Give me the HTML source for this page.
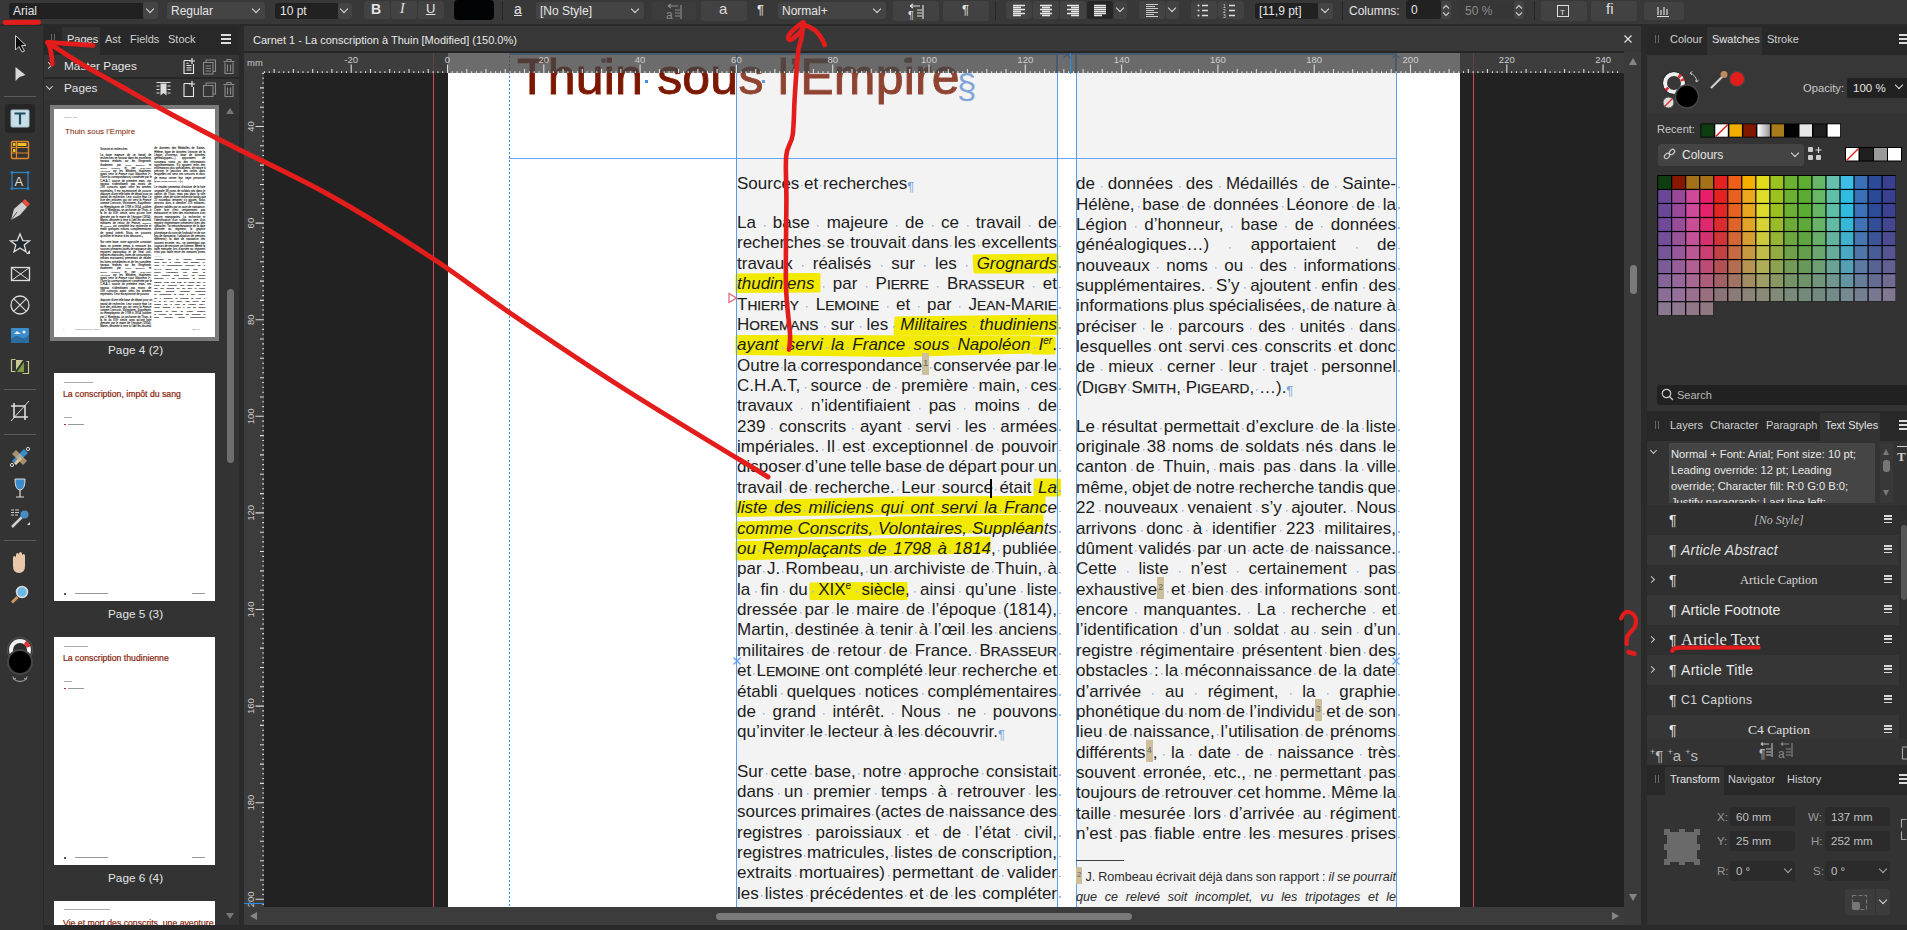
<!DOCTYPE html>
<html><head><meta charset="utf-8">
<style>
*{box-sizing:border-box;margin:0;padding:0}
html,body{width:1907px;height:930px;overflow:hidden;background:#2a2a2a;font-family:"Liberation Sans",sans-serif;color:#e6e6e6}
.a{position:absolute}
.tb{background:#383838}
.inp{background:#212121;border-radius:3px}
.dd{background:#444;border-radius:3px}
.btn{background:#424242;border-radius:3px}
.t{position:absolute;white-space:nowrap;font-size:12px;color:#e4e4e4;line-height:14px}
.chev{position:absolute;width:6px;height:6px;border-right:1.2px solid #ddd;border-bottom:1.2px solid #ddd;transform:rotate(45deg)}

.ln{position:absolute;width:320px;height:20.37px;font-size:17px;line-height:20.37px;color:#1c1c1c;white-space:nowrap;text-align:justify;text-align-last:justify}
.ln.ll{text-align:left;text-align-last:left}
.ln i{font-style:italic}
.ln s{text-decoration:none;font-size:13.7px;-webkit-text-stroke:0.25px #1c1c1c}
.ln sup{font-size:10px;line-height:0;vertical-align:6px}
.ln u{text-decoration:none;font-size:9px;color:#666;background:#cdbf9c;vertical-align:5px;line-height:0;padding:5px 1px 7px}
.pm{font-weight:normal;color:#7aa4dc;font-size:13px;vertical-align:-2px}
.hl{position:absolute;background:#f2ea00;border-radius:3px}
.fnl{position:absolute;width:320px;height:20px;font-size:12.6px;line-height:20px;color:#2a2a2a;white-space:nowrap;text-align:justify;text-align-last:justify}
.fs{text-decoration:none;font-size:8px;color:#666;background:#cdbf9c;vertical-align:4px;padding:3px 1px 5px;line-height:0}
.thumbc .ln,.thumbc .fnl{color:#000;-webkit-text-stroke:0.45px #000}
.ln .sp{background:linear-gradient(#9dbbe8,#9dbbe8) no-repeat 50% 11.5px/1.6px 1.6px}
.ln:not(.ll)::after{content:"";position:absolute;left:322px;top:12.5px;width:1.6px;height:1.6px;background:#9dbbe8}
</style></head><body>

<!-- ============ TOP TOOLBAR ============ -->
<div id="top" class="a tb" style="left:0;top:0;width:1907px;height:24px">
  <div class="a inp" style="left:9px;top:3px;width:135px;height:16px"></div>
  <div class="t" style="left:13px;top:4px;font-size:12px">Arial</div>
  <div class="a dd" style="left:143px;top:2px;width:15px;height:17px"></div>
  <div class="chev" style="left:147px;top:6px"></div>
  <div class="a dd" style="left:167px;top:2px;width:98px;height:17px"></div>
  <div class="t" style="left:171px;top:4px">Regular</div>
  <div class="chev" style="left:253px;top:6px"></div>
  <div class="a inp" style="left:275px;top:3px;width:64px;height:16px"></div>
  <div class="t" style="left:280px;top:4px">10 pt</div>
  <div class="a dd" style="left:338px;top:3px;width:14px;height:16px"></div>
  <div class="chev" style="left:341px;top:6px"></div>
  <div class="a btn" style="left:364px;top:1px;width:26px;height:18px"></div>
  <div class="t" style="left:371px;top:2px;font-weight:bold;font-size:14px">B</div>
  <div class="a btn" style="left:391px;top:1px;width:26px;height:18px"></div>
  <div class="t" style="left:400px;top:2px;font-style:italic;font-size:14px;font-family:'Liberation Serif'">I</div>
  <div class="a btn" style="left:418px;top:1px;width:26px;height:18px"></div>
  <div class="t" style="left:426px;top:2px;font-size:13px;text-decoration:underline">U</div>
  <div class="a" style="left:454px;top:0px;width:40px;height:20px;background:#020304;border-radius:4px"></div>
  <div class="a" style="left:502px;top:1px;width:1px;height:19px;background:#262626"></div>
  <div class="t" style="left:514px;top:2px;font-size:14px;text-decoration:underline">a</div>
  <div class="a dd" style="left:536px;top:2px;width:108px;height:17px"></div>
  <div class="t" style="left:540px;top:4px">[No Style]</div>
  <div class="chev" style="left:632px;top:6px"></div>
  <div class="a" style="left:652px;top:2px;width:44px;height:18px;background:#3c3c3c;border-radius:3px"></div>
  <svg class="a" style="left:665px;top:3px" width="20" height="17" viewBox="0 0 20 17"><g fill="none" stroke="#8a8a8a" stroke-width="1.2"><path d="M3 3h10M3 3l3-2M3 3l3 2M16 2v14M10 7h5M10 10h5M10 13h5"/></g><text x="1" y="16" font-size="12" fill="#8a8a8a" font-family="Liberation Sans">a</text></svg>
  <div class="a btn" style="left:701px;top:1px;width:46px;height:20px"></div>
  <div class="t" style="left:719px;top:2px;font-size:15px;color:#ddd">a</div>
  <div class="t" style="left:757px;top:3px;font-size:13px">¶</div>
  <div class="a dd" style="left:778px;top:2px;width:108px;height:17px"></div>
  <div class="t" style="left:782px;top:4px">Normal+</div>
  <div class="chev" style="left:874px;top:6px"></div>
  <div class="a btn" style="left:893px;top:1px;width:46px;height:20px"></div>
  <svg class="a" style="left:907px;top:3px" width="20" height="17" viewBox="0 0 20 17"><g fill="none" stroke="#ddd" stroke-width="1.2"><path d="M3 3h10M3 3l3-2M3 3l3 2M16 2v14M10 7h5M10 10h5M10 13h5"/></g><text x="1" y="16" font-size="11" fill="#ddd" font-family="Liberation Sans">¶</text></svg>
  <div class="a btn" style="left:943px;top:1px;width:46px;height:20px"></div>
  <div class="t" style="left:962px;top:3px;font-size:13px">¶</div>
  <div class="a" style="left:995px;top:1px;width:1px;height:19px;background:#262626"></div>
  <!-- align buttons -->
  <div class="a btn" style="left:1006px;top:1px;width:26px;height:18px"></div>
  <div class="a btn" style="left:1033px;top:1px;width:26px;height:18px"></div>
  <div class="a btn" style="left:1060px;top:1px;width:26px;height:18px"></div>
  <div class="a" style="left:1087px;top:1px;width:26px;height:18px;background:#262626;border-radius:3px"></div>
  <div class="a btn" style="left:1114px;top:1px;width:13px;height:18px"></div>
  <div class="chev" style="left:1117px;top:5px"></div>
  <svg class="a" style="left:1006px;top:1px" width="108" height="18"><g stroke="#e8e8e8" stroke-width="1.3">
    <path d="M7 4.5h12M7 6.5h8M7 8.5h12M7 10.5h8M7 12.5h12M7 14.5h8"/>
    <path d="M34 4.5h12M36 6.5h8M34 8.5h12M36 10.5h8M34 12.5h12M36 14.5h8"/>
    <path d="M61 4.5h12M65 6.5h8M61 8.5h12M65 10.5h8M61 12.5h12M65 14.5h8"/>
    <path d="M88 4.5h12M88 6.5h12M88 8.5h12M88 10.5h12M88 12.5h12M88 14.5h8"/>
  </g></svg>
  <div class="a btn" style="left:1139px;top:1px;width:26px;height:18px"></div>
  <div class="a btn" style="left:1166px;top:1px;width:13px;height:18px"></div>
  <div class="chev" style="left:1169px;top:5px"></div>
  <svg class="a" style="left:1139px;top:1px" width="26" height="18"><g stroke="#ccc" stroke-width="1.2"><path d="M7 3.5h12M7 5.5h9M7 7.5h12M7 9.5h8M7 11.5h12M7 13.5h8M7 15.5h12"/></g></svg>
  <div class="a btn" style="left:1191px;top:1px;width:26px;height:18px"></div>
  <div class="a btn" style="left:1218px;top:1px;width:26px;height:18px"></div>
  <svg class="a" style="left:1191px;top:1px" width="54" height="18"><g stroke="#ddd" stroke-width="1.3"><path d="M11 4.5h6M11 9.5h6M11 14.5h6M38 4.5h6M38 9.5h6M38 14.5h6"/></g><g fill="#ddd"><circle cx="7.5" cy="4.5" r="1"/><circle cx="7.5" cy="9.5" r="1"/><circle cx="7.5" cy="14.5" r="1"/></g><text x="32" y="7" font-size="5" fill="#ddd">1</text><text x="32" y="12" font-size="5" fill="#ddd">2</text><text x="32" y="17" font-size="5" fill="#ddd">3</text></svg>
  <div class="a inp" style="left:1255px;top:3px;width:64px;height:16px"></div>
  <div class="t" style="left:1259px;top:4px">[11,9 pt]</div>
  <div class="a dd" style="left:1318px;top:3px;width:15px;height:16px"></div>
  <div class="chev" style="left:1322px;top:6px"></div>
  <div class="a" style="left:1342px;top:1px;width:1px;height:19px;background:#262626"></div>
  <div class="t" style="left:1349px;top:4px">Columns:</div>
  <div class="a inp" style="left:1406px;top:0px;width:35px;height:19px"></div>
  <div class="t" style="left:1411px;top:3px">0</div>
  <div class="a dd" style="left:1441px;top:1px;width:10px;height:18px"></div><svg class="a" style="left:1441px;top:3px" width="10" height="15"><path d="M2 5.5L5 2.5L8 5.5M2 9.5L5 12.5L8 9.5" stroke="#ccc" stroke-width="1.1" fill="none"/></svg>
  <div class="a" style="left:1459px;top:1px;width:55px;height:18px;background:#363636;border-radius:3px"></div>
  <div class="t" style="left:1465px;top:4px;color:#8c8c8c">50 %</div>
  <div class="a dd" style="left:1514px;top:1px;width:10px;height:18px"></div><svg class="a" style="left:1514px;top:3px" width="10" height="15"><path d="M2 5.5L5 2.5L8 5.5M2 9.5L5 12.5L8 9.5" stroke="#ccc" stroke-width="1.1" fill="none"/></svg>
  <div class="a" style="left:1534px;top:1px;width:1px;height:19px;background:#262626"></div>
  <div class="a btn" style="left:1541px;top:1px;width:46px;height:20px"></div>
  <div class="a" style="left:1557px;top:5px;width:12px;height:12px;border:1.3px solid #ddd"></div>
  <div class="t" style="left:1560px;top:6px;font-size:8px">T</div>
  <div class="a btn" style="left:1591px;top:1px;width:46px;height:20px"></div>
  <div class="t" style="left:1606px;top:2px;font-size:15px;color:#ddd">fi</div>
  <div class="a btn" style="left:1644px;top:2px;width:40px;height:18px"></div>
  <svg class="a" style="left:1656px;top:4px" width="14" height="14"><g stroke="#ddd" stroke-width="1.2"><path d="M2 3v8M5 6v5M8 3v8M11 5v6M1 12.5h12"/></g></svg>
</div>
<!-- separator line under toolbar -->
<div class="a" style="left:0;top:24px;width:1907px;height:2px;background:#2a2a2a"></div>

<!-- ============ LEFT TOOLS ============ -->
<div id="tools" class="a" style="left:0;top:26px;width:43px;height:904px;background:#333">
</div>
<svg class="a" style="left:0;top:0" width="43" height="930">
  <!-- select arrow -->
  <path d="M15.5 35.5 L15.5 50 L19 46.5 L22 52 L24.5 51 L21.5 45.5 L26 45.5 Z" fill="#0a0a0a" stroke="#ddd" stroke-width="0.9"/>
  <!-- node tool -->
  <path d="M15.5 67 L15.5 81 L19.5 77 L25.5 75 Z" fill="#d8d8d8"/>
  <path d="M4 96.5h32" stroke="#5a5a5a" stroke-width="1"/>
  <!-- text tool selected -->
  <rect x="5" y="104" width="30" height="29" rx="3" fill="#262626"/>
  <rect x="11" y="110" width="18" height="17" rx="1" fill="#c9dfe8" stroke="#a8c4d0" stroke-width="1"/>
  <path d="M14.5 113.5h11M20 113.5v11" stroke="#1d4d63" stroke-width="2.2"/>
  <!-- table -->
  <rect x="11.5" y="141.5" width="17" height="17" rx="1" fill="none" stroke="#e08a2a" stroke-width="1.4"/>
  <path d="M11.5 147.5h17M11.5 153h17M16.5 141.5v17" stroke="#e08a2a" stroke-width="1.2"/>
  <rect x="13" y="143" width="2.5" height="3" fill="#f0c020"/><rect x="13" y="149" width="2.5" height="3" fill="#f0c020"/><rect x="17.5" y="143" width="9" height="3" fill="#f0c020"/>
  <!-- artistic text -->
  <rect x="12" y="172.5" width="16" height="16" fill="none" stroke="#2a80c0" stroke-width="1.3"/>
  <circle cx="12" cy="172.5" r="1.5" fill="#2a80c0"/><circle cx="28" cy="172.5" r="1.5" fill="#2a80c0"/><circle cx="12" cy="188.5" r="1.5" fill="#2a80c0"/><circle cx="28" cy="188.5" r="1.5" fill="#2a80c0"/>
  <text x="14.5" y="186" font-size="13" fill="#ddd" font-family="Liberation Sans">A</text>
  <!-- pen -->
  <path d="M11 220 L14 209 L22 202 L27 207 L20 215 Z" fill="#cfcfcf"/>
  <path d="M22 202 L25 199 L30 204 L27 207 Z" fill="#e8503a"/>
  <path d="M11 220 L17 212" stroke="#555" stroke-width="1"/>
  <!-- star -->
  <path d="M20 234 L22.8 240.6 L29.5 240.8 L24.2 245 L26 251.8 L20 248 L14 251.8 L15.8 245 L10.5 240.8 L17.2 240.6 Z" fill="#1e2a30" stroke="#ddd" stroke-width="1.3"/>
  <path d="M30 250 L30 254 L26 254 Z" fill="#ddd"/>
  <!-- frame rect -->
  <rect x="11.5" y="267.5" width="18" height="13" fill="none" stroke="#ddd" stroke-width="1.3"/>
  <path d="M11.5 267.5 L29.5 280.5 M29.5 267.5 L11.5 280.5" stroke="#ddd" stroke-width="1"/>
  <!-- ellipse frame -->
  <circle cx="20" cy="305" r="9" fill="none" stroke="#ddd" stroke-width="1.3"/>
  <path d="M13.6 298.6 L26.4 311.4 M26.4 298.6 L13.6 311.4" stroke="#ddd" stroke-width="1.1"/>
  <!-- picture -->
  <rect x="11" y="328" width="18" height="15" rx="1" fill="#3a8ccc"/>
  <path d="M11 339 Q16 334 20 337 T29 335 V343 H11 Z" fill="#2a6ca0"/>
  <path d="M14 334 L17 331 L21 334 Z" fill="#e8f0f4"/>
  <circle cx="24" cy="332" r="1.6" fill="#e8f0f4"/>
  <!-- linked -->
  <path d="M11.5 359.5 h4 M11.5 359.5 v12 h4" stroke="#c8c890" stroke-width="1.2" fill="none"/>
  <path d="M16 360 h7 l-7 10 Z" fill="#c8c890"/><path d="M24 362 v10 h-7 Z" fill="#78a040"/>
  <path d="M22.5 373.5 h6 v-12 h-2" stroke="#c8c890" stroke-width="1.2" fill="none"/>
  <path d="M4 389.5h32" stroke="#5a5a5a" stroke-width="1"/>
  <!-- crop -->
  <path d="M14 403 V417 H28 M11 406 H25 V420" stroke="#ddd" stroke-width="1.6" fill="none"/>
  <path d="M11 421 L29 401" stroke="#ddd" stroke-width="1"/>
  <path d="M4 434.5h32" stroke="#5a5a5a" stroke-width="1"/>
  <!-- fill tool (pencils) -->
  <path d="M12 461 L24 449 L28 453 L16 465 Z" fill="#3a8ccc"/>
  <path d="M14 463 L20 457 L22 459 L16 465 Z" fill="#e8c898"/>
  <path d="M12 454 L16 450 L27 461 L23 465 Z" fill="#d8b888" opacity="0.7"/>
  <circle cx="12" cy="465" r="1.6" fill="none" stroke="#ddd" stroke-width="1"/><circle cx="28" cy="449" r="1.6" fill="none" stroke="#ddd" stroke-width="1"/>
  <!-- transparency (glass) -->
  <path d="M15 479 Q15 490 20 490 Q25 490 25 479 Z" fill="#3a8ccc" stroke="#ddd" stroke-width="1"/>
  <path d="M20 490 V497 M16 497 H24" stroke="#ddd" stroke-width="1.2"/>
  <!-- dropper w/ list -->
  <path d="M11 510h3M11 512.5h3M11 515h3M15 510h4M15 512.5h4M15 515h3" stroke="#ddd" stroke-width="0.9"/>
  <path d="M12 527 L22 517" stroke="#cfcfcf" stroke-width="2.5"/>
  <circle cx="24.5" cy="514.5" r="4" fill="#4a8cc0"/>
  <path d="M30 522 L30 525 L27 525 Z" fill="#ddd"/>
  <path d="M4 540.5h32" stroke="#5a5a5a" stroke-width="1"/>
  <!-- hand -->
  <path d="M13 566 V558 Q13 556 14.5 556 Q16 556 16 558 V562 V555 Q16 553 17.5 553 Q19 553 19 555 V561 V554 Q19 552 20.5 552 Q22 552 22 554 V561 V556 Q22 554 23.5 554 Q25 554 25 556 V566 Q25 573 19 573 Q13 573 13 566 Z" fill="#e8c8a8"/>
  <!-- zoom -->
  <circle cx="22" cy="592" r="5.5" fill="#6ab8e8" stroke="#ddd" stroke-width="1.5"/>
  <path d="M17.5 597 L12 602.5" stroke="#c89860" stroke-width="3"/>
  <!-- colour wells -->
  <circle cx="20" cy="650" r="12.5" fill="#2c2c2c" stroke="#4a4a4a" stroke-width="1.5"/>
  <circle cx="20" cy="650" r="9" fill="none" stroke="#f0f0f0" stroke-width="4"/>
  <path d="M25 642.5 A9 9 0 0 1 28.6 647" stroke="#e23030" stroke-width="4" fill="none"/>
  <circle cx="20" cy="662" r="12" fill="#000" stroke="#464646" stroke-width="2"/>
  <path d="M13.5 679 Q20 684 26.5 679" stroke="#aaa" stroke-width="1" fill="none"/>
  <path d="M13.5 679 l-0.5 -2.5 M13.5 679 l2.5 -0.5 M26.5 679 l-2.5 -0.5 M26.5 679 l0.5 -2.5" stroke="#aaa" stroke-width="1"/>
</svg>

<!-- ============ PAGES PANEL ============ -->
<div id="pages" class="a" style="left:44px;top:26px;width:195px;height:899px;background:#333"></div>
<div class="a" style="left:44px;top:26px;width:195px;height:29px;background:#282828"></div>
<div class="a" style="left:62px;top:27px;width:38px;height:28px;background:#333"></div>
<div class="a" style="left:51px;top:34px;width:1px;height:8px;background:#666"></div>
<div class="a" style="left:54px;top:34px;width:1px;height:8px;background:#666"></div>
<div class="t" style="left:67px;top:32px;font-size:11px">Pages</div>
<div class="t" style="left:105px;top:32px;font-size:11px;color:#d0d0d0">Ast</div>
<div class="t" style="left:130px;top:32px;font-size:11px;color:#d0d0d0">Fields</div>
<div class="t" style="left:168px;top:32px;font-size:11px;color:#d0d0d0">Stock</div>
<div class="a" style="left:221px;top:34px;width:10px;height:10px;background:repeating-linear-gradient(to bottom,#ddd 0 1.6px,transparent 1.6px 4px)"></div>
<div class="a" style="left:44px;top:55px;width:195px;height:22px;background:#353535"></div>
<div class="a" style="left:44px;top:77px;width:195px;height:2px;background:#272727"></div>
<div class="a" style="left:44px;top:79px;width:195px;height:21px;background:#353535"></div>
<div class="a" style="left:46px;top:63px;width:5px;height:5px;border-right:1.2px solid #ccc;border-top:1.2px solid #ccc;transform:rotate(45deg)"></div>
<div class="t" style="left:64px;top:59px;font-size:11.8px">Master Pages</div>
<div class="a" style="left:47px;top:84px;width:5px;height:5px;border-right:1.2px solid #ccc;border-bottom:1.2px solid #ccc;transform:rotate(45deg)"></div>
<div class="t" style="left:64px;top:81px;font-size:11.8px">Pages</div>
<svg class="a" style="left:150px;top:55px" width="89" height="45">
 <g fill="none" stroke-width="1.1">
  <path d="M34 5.5h6.5M43.5 9v9.5h-9.5v-13" stroke="#e8e8e8"/><path d="M36.5 10.5h5M36.5 12.8h5M36.5 15h5M36.5 8.3h2" stroke="#e8e8e8"/><path d="M42 3v6M39 6h6" stroke="#e8e8e8" stroke-width="1.2"/>
  <path d="M53.5 7.5h9.5v11.5h-9.5z M56 7.5v-2.5h9.5v11.5h-2.5" stroke="#8a8a8a"/><path d="M55.5 11h5.5M55.5 13.5h5.5M55.5 16h5.5" stroke="#8a8a8a"/>
  <path d="M73.5 6.5h11M77 6.5v-2h4v2M75 7.5v11h8v-11M77.5 9.5v7M80.5 9.5v7" stroke="#8a8a8a"/>
  <path d="M6.5 27.5h14M6.5 31h3M17.5 31h3M6.5 34.5h3M17.5 34.5h3M6.5 38h3M17.5 38h3" stroke="#ddd"/><path d="M10.5 28.5h6v12l-3-2.5-3 2.5z" fill="#ddd" stroke="none"/>
  <path d="M34 28.5h6.5M43.5 32v9.5h-9.5v-13" stroke="#e8e8e8"/><path d="M42 26v6M39 29h6" stroke="#e8e8e8" stroke-width="1.2"/>
  <path d="M53.5 30.5h9.5v11h-9.5z M56 30.5v-2.5h9.5v11h-2.5" stroke="#8a8a8a"/>
  <path d="M73.5 29.5h11M77 29.5v-2h4v2M75 30.5v11h8v-11M77.5 32.5v7M80.5 32.5v7" stroke="#8a8a8a"/>
 </g>
</svg>
<!-- scrollbar -->
<div class="a" style="left:227px;top:289px;width:7px;height:174px;background:#6e6e6e;border-radius:4px"></div>
<div class="a" style="left:226px;top:108px;width:0;height:0;border-left:4px solid transparent;border-right:4px solid transparent;border-bottom:6px solid #777"></div>
<div class="a" style="left:226px;top:913px;width:0;height:0;border-left:4px solid transparent;border-right:4px solid transparent;border-top:6px solid #777"></div>
<!-- page 4 thumb -->
<div class="a" style="left:50px;top:105px;width:169px;height:236px;background:#7b7b7b"></div>
<div class="a" style="left:54px;top:109px;width:161px;height:228px;background:#fff;overflow:hidden"><div class="a thumbc" style="left:0;top:0;width:1012.5px;height:1431px;transform-origin:0 0;transform:scale(0.1594)"><div class="t" style="left:62.5px;top:46.7px;font-size:11px;line-height:14px;color:#666">Conscrits · Thuin</div><div class="t" style="left:69.5px;top:110.7px;font-size:50px;line-height:60px;color:#7c1800">Thuin sous l’Empire</div><div class="a" style="left:628.5px;top:926.2px;width:48px;height:1px;background:#444"></div><div class="ln ll" style="left:289.5px;top:239.5px">Sources et recherches</div><div class="ln" style="left:289.5px;top:278.7px">La base majeure de ce travail de</div><div class="ln" style="left:289.5px;top:299.1px">recherches se trouvait dans les excellents</div><div class="ln" style="left:289.5px;top:319.5px">travaux réalisés sur les <i>Grognards</i></div><div class="ln" style="left:289.5px;top:339.8px"><i>thudiniens</i> par <s>Pierre Brasseur</s> et</div><div class="ln" style="left:289.5px;top:360.2px"><s>Thierry Lemoine</s> et par <s>Jean-Marie</s></div><div class="ln" style="left:289.5px;top:380.6px"><s>Horemans</s> sur les <i>Militaires thudiniens</i></div><div class="ln" style="left:289.5px;top:400.9px"><i>ayant servi la France sous Napoléon I<sup>er</sup></i>.</div><div class="ln" style="left:289.5px;top:421.3px">Outre la correspondance<u>1</u> conservée par le</div><div class="ln" style="left:289.5px;top:441.7px">C.H.A.T, source de première main, ces</div><div class="ln" style="left:289.5px;top:462.1px">travaux n’identifiaient pas moins de</div><div class="ln" style="left:289.5px;top:482.4px">239 conscrits ayant servi les armées</div><div class="ln" style="left:289.5px;top:502.8px">impériales. Il est exceptionnel de pouvoir</div><div class="ln" style="left:289.5px;top:523.2px">disposer d’une telle base de départ pour un</div><div class="ln" style="left:289.5px;top:543.5px">travail de recherche. Leur source était <i>La</i></div><div class="ln" style="left:289.5px;top:563.9px"><i>liste des miliciens qui ont servi la France</i></div><div class="ln" style="left:289.5px;top:584.3px"><i>comme Conscrits, Volontaires, Suppléants</i></div><div class="ln" style="left:289.5px;top:604.6px"><i>ou Remplaçants de 1798 à 1814</i>, publiée</div><div class="ln" style="left:289.5px;top:625.0px">par J. Rombeau, un archiviste de Thuin, à</div><div class="ln" style="left:289.5px;top:645.4px">la fin du XIX<sup>e</sup> siècle, ainsi qu’une liste</div><div class="ln" style="left:289.5px;top:665.8px">dressée par le maire de l’époque (1814),</div><div class="ln" style="left:289.5px;top:686.1px">Martin, destinée à tenir à l’œil les anciens</div><div class="ln" style="left:289.5px;top:706.5px">militaires de retour de France. <s>Brasseur</s></div><div class="ln" style="left:289.5px;top:726.9px">et <s>Lemoine</s> ont complété leur recherche et</div><div class="ln" style="left:289.5px;top:747.2px">établi quelques notices complémentaires</div><div class="ln" style="left:289.5px;top:767.6px">de grand intérêt. Nous ne pouvons</div><div class="ln ll" style="left:289.5px;top:788.0px">qu’inviter le lecteur à les découvrir.<b class="pm">¶</b></div><div class="ln" style="left:289.5px;top:827.2px">Sur cette base, notre approche consistait</div><div class="ln" style="left:289.5px;top:847.6px">dans un premier temps à retrouver les</div><div class="ln" style="left:289.5px;top:868.0px">sources primaires (actes de naissance des</div><div class="ln" style="left:289.5px;top:888.3px">registres paroissiaux et de l’état civil,</div><div class="ln" style="left:289.5px;top:908.7px">registres matricules, listes de conscription,</div><div class="ln" style="left:289.5px;top:929.1px">extraits mortuaires) permettant de valider</div><div class="ln" style="left:289.5px;top:949.5px">les listes précédentes et de les compléter</div><div class="ln" style="left:289.5px;top:969.8px">travaux réalisés sur les <i>Grognards</i></div><div class="ln" style="left:289.5px;top:990.2px"><i>thudiniens</i> par <s>Pierre Brasseur</s> et</div><div class="ln" style="left:289.5px;top:1010.6px"><s>Thierry Lemoine</s> et par <s>Jean-Marie</s></div><div class="ln" style="left:289.5px;top:1030.9px"><s>Horemans</s> sur les <i>Militaires thudiniens</i></div><div class="ln" style="left:289.5px;top:1051.3px"><i>ayant servi la France sous Napoléon I<sup>er</sup></i>.</div><div class="ln" style="left:289.5px;top:1071.7px">Outre la correspondance<u>1</u> conservée par le</div><div class="ln" style="left:289.5px;top:1092.0px">C.H.A.T, source de première main, ces</div><div class="ln" style="left:289.5px;top:1112.4px">travaux n’identifiaient pas moins de</div><div class="ln" style="left:289.5px;top:1132.8px">239 conscrits ayant servi les armées</div><div class="ln ll" style="left:289.5px;top:1153.2px">impériales. Il est exceptionnel de pouvoir</div><div class="ln" style="left:289.5px;top:1192.3px">disposer d’une telle base de départ pour un</div><div class="ln" style="left:289.5px;top:1212.7px">travail de recherche. Leur source était <i>La</i></div><div class="ln" style="left:289.5px;top:1233.1px"><i>liste des miliciens qui ont servi la France</i></div><div class="ln" style="left:289.5px;top:1253.4px"><i>comme Conscrits, Volontaires, Suppléants</i></div><div class="ln" style="left:289.5px;top:1273.8px"><i>ou Remplaçants de 1798 à 1814</i>, publiée</div><div class="ln" style="left:289.5px;top:1294.2px">par J. Rombeau, un archiviste de Thuin, à</div><div class="ln" style="left:289.5px;top:1314.5px">la fin du XIX<sup>e</sup> siècle, ainsi qu’une liste</div><div class="ln" style="left:289.5px;top:1334.9px">dressée par le maire de l’époque (1814),</div><div class="ln" style="left:289.5px;top:1355.3px">Martin, destinée à tenir à l’œil les anciens</div><div class="ln" style="left:628.5px;top:239.1px">de données des Médaillés de Sainte-</div><div class="ln" style="left:628.5px;top:259.5px">Hélène, base de données Léonore de la</div><div class="ln" style="left:628.5px;top:279.9px">Légion d’honneur, base de données</div><div class="ln" style="left:628.5px;top:300.2px">généalogiques…) apportaient de</div><div class="ln" style="left:628.5px;top:320.6px">nouveaux noms ou des informations</div><div class="ln" style="left:628.5px;top:341.0px">supplémentaires. S’y ajoutent enfin des</div><div class="ln" style="left:628.5px;top:361.4px">informations plus spécialisées, de nature à</div><div class="ln" style="left:628.5px;top:381.7px">préciser le parcours des unités dans</div><div class="ln" style="left:628.5px;top:402.1px">lesquelles ont servi ces conscrits et donc</div><div class="ln" style="left:628.5px;top:422.5px">de mieux cerner leur trajet personnel</div><div class="ln ll" style="left:628.5px;top:442.8px">(<s>Digby Smith</s>, <s>Pigeard</s>, …).<b class="pm">¶</b></div><div class="ln" style="left:628.5px;top:482.4px">Le résultat permettait d’exclure de la liste</div><div class="ln" style="left:628.5px;top:502.8px">originale 38 noms de soldats nés dans le</div><div class="ln" style="left:628.5px;top:523.2px">canton de Thuin, mais pas dans la ville</div><div class="ln" style="left:628.5px;top:543.5px">même, objet de notre recherche tandis que</div><div class="ln" style="left:628.5px;top:563.9px">22 nouveaux venaient s’y ajouter. Nous</div><div class="ln" style="left:628.5px;top:584.3px">arrivons donc à identifier 223 militaires,</div><div class="ln" style="left:628.5px;top:604.6px">dûment validés par un acte de naissance.</div><div class="ln" style="left:628.5px;top:625.0px">Cette liste n’est certainement pas</div><div class="ln" style="left:628.5px;top:645.4px">exhaustive<u>2</u> et bien des informations sont</div><div class="ln" style="left:628.5px;top:665.8px">encore manquantes. La recherche et</div><div class="ln" style="left:628.5px;top:686.1px">l’identification d’un soldat au sein d’un</div><div class="ln" style="left:628.5px;top:706.5px">registre régimentaire présentent bien des</div><div class="ln" style="left:628.5px;top:726.9px">obstacles : la méconnaissance de la date</div><div class="ln" style="left:628.5px;top:747.2px">d’arrivée au régiment, la graphie</div><div class="ln" style="left:628.5px;top:767.6px">phonétique du nom de l’individu<u>3</u> et de son</div><div class="ln" style="left:628.5px;top:788.0px">lieu de naissance, l’utilisation de prénoms</div><div class="ln" style="left:628.5px;top:808.4px">différents<u>4</u>, la date de naissance très</div><div class="ln" style="left:628.5px;top:828.7px">souvent erronée, etc., ne permettant pas</div><div class="ln" style="left:628.5px;top:849.1px">toujours de retrouver cet homme. Même la</div><div class="ln" style="left:628.5px;top:869.5px">taille mesurée lors d’arrivée au régiment</div><div class="ln" style="left:628.5px;top:889.8px">n’est pas fiable entre les mesures prises</div><div class="fnl" style="left:628.5px;top:933.7px;font-size:12.4px">Horemans sur les Militaires thudiniens</div><div class="fnl" style="left:628.5px;top:953.9px;font-size:12.4px">ayant servi la France sous Napoléon Ier.</div><div class="fnl" style="left:628.5px;top:974.1px;font-size:12.4px">Outre la correspondance1 conservée par le</div><div class="fnl" style="left:628.5px;top:994.3px;font-size:12.4px">C.H.A.T, source de première main, ces</div><div class="fnl" style="left:628.5px;top:1014.5px;font-size:12.4px">travaux n’identifiaient pas moins de</div><div class="fnl" style="left:628.5px;top:1034.7px;font-size:12.4px">239 conscrits ayant servi les armées</div><div class="fnl" style="left:628.5px;top:1054.9px;font-size:12.4px">impériales. Il est exceptionnel de pouvoir</div><div class="fnl" style="left:628.5px;top:1075.1px;font-size:12.4px">disposer d’une telle base de départ pour un</div><div class="fnl" style="left:628.5px;top:1095.3px;font-size:12.4px">travail de recherche. Leur source était La</div><div class="fnl" style="left:628.5px;top:1115.5px;font-size:12.4px">liste des miliciens qui ont servi la France</div><div class="fnl" style="left:628.5px;top:1135.7px;font-size:12.4px">comme Conscrits, Volontaires, Suppléants</div><div class="fnl" style="left:628.5px;top:1155.9px;font-size:12.4px">ou Remplaçants de 1798 à 1814, publiée</div><div class="fnl" style="left:628.5px;top:1176.1px;font-size:12.4px">par J. Rombeau, un archiviste de Thuin, à</div><div class="fnl" style="left:628.5px;top:1196.3px;font-size:12.4px">la fin du XIXe siècle, ainsi qu’une liste</div><div class="fnl" style="left:628.5px;top:1216.5px;font-size:12.4px">dressée par le maire de l’époque (1814),</div><div class="fnl" style="left:628.5px;top:1236.7px;font-size:12.4px">Martin, destinée à tenir à l’œil les anciens</div><div class="fnl" style="left:628.5px;top:1256.9px;font-size:12.4px">militaires de retour de France. Brasseur</div><div class="fnl" style="left:628.5px;top:1277.1px;font-size:12.4px">et Lemoine ont complété leur recherche et</div><div class="fnl" style="left:628.5px;top:1297.3px;font-size:12.4px">établi quelques notices complémentaires</div><div class="t" style="left:58.5px;top:1373.7px;font-size:11px;color:#333">1</div><div class="t" style="left:131.5px;top:1373.7px;font-size:11px;color:#555">Conscrits thudiniens de l’Empire</div><div class="t" style="left:865.5px;top:1373.7px;font-size:11px;color:#555">Page 4/48</div></div></div>
<div class="t" style="left:108px;top:343px;font-size:11.8px">Page 4 (2)</div>
<!-- page 5 -->
<div class="a" style="left:54px;top:373px;width:161px;height:228px;background:#fff;overflow:hidden">
  <div class="a" style="left:10px;top:9px;width:29px;height:1px;background:#aaa"></div>
  <div class="t" style="left:9px;top:16px;font-size:8.7px;-webkit-text-stroke:0.2px #8a1e10;line-height:10px;color:#861a08">La conscription, impôt du sang</div>
  <div class="a" style="left:10px;top:44px;width:8px;height:1px;background:#aaa"></div>
  <div class="a" style="left:10px;top:51px;width:2px;height:1px;background:#b03020"></div><div class="a" style="left:14px;top:51px;width:16px;height:1px;background:#999"></div>
  <div class="a" style="left:10px;top:220px;width:2px;height:2px;background:#555"></div>
  <div class="a" style="left:21px;top:220px;width:33px;height:1px;background:#999"></div>
  <div class="a" style="left:138px;top:220px;width:13px;height:1px;background:#999"></div>
</div>
<div class="t" style="left:108px;top:607px;font-size:11.8px">Page 5 (3)</div>
<!-- page 6 -->
<div class="a" style="left:54px;top:637px;width:161px;height:228px;background:#fff;overflow:hidden">
  <div class="a" style="left:10px;top:9px;width:24px;height:1px;background:#aaa"></div>
  <div class="t" style="left:9px;top:16px;font-size:8.7px;-webkit-text-stroke:0.2px #8a1e10;line-height:10px;color:#861a08">La conscription thudinienne</div>
  <div class="a" style="left:10px;top:44px;width:8px;height:1px;background:#aaa"></div>
  <div class="a" style="left:10px;top:51px;width:2px;height:1px;background:#b03020"></div><div class="a" style="left:14px;top:51px;width:16px;height:1px;background:#999"></div>
  <div class="a" style="left:10px;top:220px;width:2px;height:2px;background:#555"></div>
  <div class="a" style="left:21px;top:220px;width:33px;height:1px;background:#999"></div>
  <div class="a" style="left:138px;top:220px;width:13px;height:1px;background:#999"></div>
</div>
<div class="t" style="left:108px;top:871px;font-size:11.8px">Page 6 (4)</div>
<!-- page 7 -->
<div class="a" style="left:54px;top:901px;width:161px;height:24px;background:#fff;overflow:hidden">
  <div class="a" style="left:10px;top:8px;width:46px;height:1px;background:#aaa"></div>
  <div class="t" style="left:9px;top:17px;font-size:8.7px;-webkit-text-stroke:0.2px #8a1e10;line-height:10px;color:#861a08">Vie et mort des conscrits, une aventure</div>
</div>


<!-- ============ DOCUMENT ============ -->
<div id="doc" class="a" style="left:244px;top:26px;width:1397px;height:899px;background:#383838"></div>
<div class="t" style="left:253px;top:33px;font-size:11px;color:#e8e8e8">Carnet 1 - La conscription à Thuin [Modified] (150.0%)</div>
<svg class="a" style="left:1623px;top:34px" width="10" height="10"><path d="M1.5 1.5L8.5 8.5M8.5 1.5L1.5 8.5" stroke="#ddd" stroke-width="1.3"/></svg>
<div id="canvas" class="a" style="left:244px;top:52px;width:1380px;height:855px;background:#222;overflow:hidden">
  <div class="a" style="left:203.5px;top:0;width:1012.5px;height:855px;background:#fff"></div>
  <div class="a" style="left:189px;top:0;width:1px;height:855px;background:#d2485a"></div>
  <div class="a" style="left:1229px;top:0;width:1px;height:855px;background:#d2485a"></div>
</div>
<!-- title -->
<div class="t" style="left:517px;top:47px;font-size:50px;line-height:60px;letter-spacing:0.2px;color:#7c1800;-webkit-text-stroke:0.9px #7c1800">Thuin sous l’Empire</div>
<div class="t" style="left:957px;top:67px;font-size:35px;line-height:40px;color:#6a9ad8">§</div>
<div class="a" style="left:645px;top:80px;width:3px;height:3px;background:#4a8ae0"></div>
<div class="a" style="left:762px;top:80px;width:3px;height:3px;background:#4a8ae0"></div>
<!-- text frame overlay -->
<div class="a" style="left:737px;top:52px;width:320px;height:855px;background:rgba(205,205,205,0.24)"></div>
<div class="a" style="left:1076px;top:52px;width:320px;height:855px;background:rgba(205,205,205,0.24)"></div>
<!-- highlights -->
<svg class="a" style="left:0;top:0" width="1907" height="930"><g fill="#f2ea00" stroke="#f2ea00" stroke-width="3" stroke-linejoin="round"><polygon points="974,256 1057,255 1057,272 975,272"/><polygon points="737,275 819,274.5 819,291 737,291.5"/><polygon points="896,318 1057,316 1057,333.5 895,334"/><polygon points="737,336.5 1030,337 1031,352 900,355.5 737,353.5"/><polygon points="1033,338 1054,338 1054,353 1033,353"/><polygon points="1035,480 1059.5,480 1059.5,495 1035,495"/><polygon points="737,502 900,498 1044,497.5 1044,512 900,513 737,515.5"/><polygon points="737,523 900,518 1042,516 1042,530.5 900,533 737,538"/><polygon points="737,542.5 989,538 989,551.5 737,559"/><polygon points="811,584 906,583.5 906,598.5 811,598.5"/></g></svg>
<!-- guides -->
<div class="a" style="left:508.5px;top:52px;width:1.5px;height:855px;background:repeating-linear-gradient(to bottom,#2e8ae8 0 2px,transparent 2px 4px)"></div>
<div class="a" style="left:509px;top:157.5px;width:887px;height:1.5px;background:#6aa6f2"></div>
<div class="a" style="left:736px;top:52px;width:1.2px;height:855px;background:#5a9cf0"></div>
<div class="a" style="left:1056.5px;top:52px;width:1.2px;height:855px;background:#5a9cf0"></div>
<div class="a" style="left:1075.5px;top:52px;width:1.2px;height:855px;background:#5a9cf0"></div>
<div class="a" style="left:1395.5px;top:52px;width:1.2px;height:855px;background:#5a9cf0"></div>
<svg class="a" style="left:732px;top:656px" width="10" height="10"><path d="M1.5 1.5L8.5 8.5M8.5 1.5L1.5 8.5" stroke="#5a9cf0" stroke-width="1.1"/></svg>
<svg class="a" style="left:1391px;top:656px" width="10" height="10"><path d="M1.5 1.5L8.5 8.5M8.5 1.5L1.5 8.5" stroke="#5a9cf0" stroke-width="1.1"/></svg>
<!-- overflow triangle -->
<svg class="a" style="left:728px;top:292px" width="10" height="12"><path d="M1 1.5 L8.5 6 L1 10.5 Z" fill="#fff" stroke="#e06070" stroke-width="1.2"/></svg>
<!-- text -->
<div id="body">
<div class="ln ll" style="left:737px;top:173.83px">Sources<span class="sp"> </span>et<span class="sp"> </span>recherches<b class="pm">¶</b></div>
<div class="ln" style="left:737px;top:213.03px">La<span class="sp"> </span>base<span class="sp"> </span>majeure<span class="sp"> </span>de<span class="sp"> </span>ce<span class="sp"> </span>travail<span class="sp"> </span>de</div>
<div class="ln" style="left:737px;top:233.40px">recherches<span class="sp"> </span>se<span class="sp"> </span>trouvait<span class="sp"> </span>dans<span class="sp"> </span>les<span class="sp"> </span>excellents</div>
<div class="ln" style="left:737px;top:253.77px">travaux<span class="sp"> </span>réalisés<span class="sp"> </span>sur<span class="sp"> </span>les<span class="sp"> </span><i>Grognards</i></div>
<div class="ln" style="left:737px;top:274.14px"><i>thudiniens</i><span class="sp"> </span>par<span class="sp"> </span>P<s>IERRE</s><span class="sp"> </span>B<s>RASSEUR</s><span class="sp"> </span>et</div>
<div class="ln" style="left:737px;top:294.51px">T<s>HIERRY</s><span class="sp"> </span>L<s>EMOINE</s><span class="sp"> </span>et<span class="sp"> </span>par<span class="sp"> </span>J<s>EAN</s>-M<s>ARIE</s></div>
<div class="ln" style="left:737px;top:314.88px">H<s>OREMANS</s><span class="sp"> </span>sur<span class="sp"> </span>les<span class="sp"> </span><i>Militaires<span class="sp"> </span>thudiniens</i></div>
<div class="ln" style="left:737px;top:335.25px"><i>ayant<span class="sp"> </span>servi<span class="sp"> </span>la<span class="sp"> </span>France<span class="sp"> </span>sous<span class="sp"> </span>Napoléon<span class="sp"> </span>I<sup>er</sup></i>.</div>
<div class="ln" style="left:737px;top:355.62px;word-spacing:-1.12px">Outre<span class="sp"> </span>la<span class="sp"> </span>correspondance<u>1</u><span class="sp"> </span>conservée<span class="sp"> </span>par<span class="sp"> </span>le</div>
<div class="ln" style="left:737px;top:375.99px">C.H.A.T,<span class="sp"> </span>source<span class="sp"> </span>de<span class="sp"> </span>première<span class="sp"> </span>main,<span class="sp"> </span>ces</div>
<div class="ln" style="left:737px;top:396.36px">travaux<span class="sp"> </span>n’identifiaient<span class="sp"> </span>pas<span class="sp"> </span>moins<span class="sp"> </span>de</div>
<div class="ln" style="left:737px;top:416.73px">239<span class="sp"> </span>conscrits<span class="sp"> </span>ayant<span class="sp"> </span>servi<span class="sp"> </span>les<span class="sp"> </span>armées</div>
<div class="ln" style="left:737px;top:437.10px">impériales.<span class="sp"> </span>Il<span class="sp"> </span>est<span class="sp"> </span>exceptionnel<span class="sp"> </span>de<span class="sp"> </span>pouvoir</div>
<div class="ln" style="left:737px;top:457.47px;word-spacing:-1.17px">disposer<span class="sp"> </span>d’une<span class="sp"> </span>telle<span class="sp"> </span>base<span class="sp"> </span>de<span class="sp"> </span>départ<span class="sp"> </span>pour<span class="sp"> </span>un</div>
<div class="ln" style="left:737px;top:477.84px">travail<span class="sp"> </span>de<span class="sp"> </span>recherche.<span class="sp"> </span>Leur<span class="sp"> </span>source<span class="sp"> </span>était<span class="sp"> </span><i>La</i></div>
<div class="ln" style="left:737px;top:498.21px"><i>liste<span class="sp"> </span>des<span class="sp"> </span>miliciens<span class="sp"> </span>qui<span class="sp"> </span>ont<span class="sp"> </span>servi<span class="sp"> </span>la<span class="sp"> </span>France</i></div>
<div class="ln" style="left:737px;top:518.58px;word-spacing:-0.25px"><i>comme<span class="sp"> </span>Conscrits,<span class="sp"> </span>Volontaires,<span class="sp"> </span>Suppléants</i></div>
<div class="ln" style="left:737px;top:538.95px"><i>ou<span class="sp"> </span>Remplaçants<span class="sp"> </span>de<span class="sp"> </span>1798<span class="sp"> </span>à<span class="sp"> </span>1814</i>,<span class="sp"> </span>publiée</div>
<div class="ln" style="left:737px;top:559.32px">par<span class="sp"> </span>J.<span class="sp"> </span>Rombeau,<span class="sp"> </span>un<span class="sp"> </span>archiviste<span class="sp"> </span>de<span class="sp"> </span>Thuin,<span class="sp"> </span>à</div>
<div class="ln" style="left:737px;top:579.69px">la<span class="sp"> </span>fin<span class="sp"> </span>du<span class="sp"> </span>XIX<sup>e</sup><span class="sp"> </span>siècle,<span class="sp"> </span>ainsi<span class="sp"> </span>qu’une<span class="sp"> </span>liste</div>
<div class="ln" style="left:737px;top:600.06px">dressée<span class="sp"> </span>par<span class="sp"> </span>le<span class="sp"> </span>maire<span class="sp"> </span>de<span class="sp"> </span>l’époque<span class="sp"> </span>(1814),</div>
<div class="ln" style="left:737px;top:620.43px">Martin,<span class="sp"> </span>destinée<span class="sp"> </span>à<span class="sp"> </span>tenir<span class="sp"> </span>à<span class="sp"> </span>l’œil<span class="sp"> </span>les<span class="sp"> </span>anciens</div>
<div class="ln" style="left:737px;top:640.80px">militaires<span class="sp"> </span>de<span class="sp"> </span>retour<span class="sp"> </span>de<span class="sp"> </span>France.<span class="sp"> </span>B<s>RASSEUR</s></div>
<div class="ln" style="left:737px;top:661.17px">et<span class="sp"> </span>L<s>EMOINE</s><span class="sp"> </span>ont<span class="sp"> </span>complété<span class="sp"> </span>leur<span class="sp"> </span>recherche<span class="sp"> </span>et</div>
<div class="ln" style="left:737px;top:681.54px">établi<span class="sp"> </span>quelques<span class="sp"> </span>notices<span class="sp"> </span>complémentaires</div>
<div class="ln" style="left:737px;top:701.91px">de<span class="sp"> </span>grand<span class="sp"> </span>intérêt.<span class="sp"> </span>Nous<span class="sp"> </span>ne<span class="sp"> </span>pouvons</div>
<div class="ln ll" style="left:737px;top:722.28px">qu’inviter<span class="sp"> </span>le<span class="sp"> </span>lecteur<span class="sp"> </span>à<span class="sp"> </span>les<span class="sp"> </span>découvrir.<b class="pm">¶</b></div>
<div class="ln" style="left:737px;top:761.53px">Sur<span class="sp"> </span>cette<span class="sp"> </span>base,<span class="sp"> </span>notre<span class="sp"> </span>approche<span class="sp"> </span>consistait</div>
<div class="ln" style="left:737px;top:781.90px">dans<span class="sp"> </span>un<span class="sp"> </span>premier<span class="sp"> </span>temps<span class="sp"> </span>à<span class="sp"> </span>retrouver<span class="sp"> </span>les</div>
<div class="ln" style="left:737px;top:802.27px;word-spacing:-0.66px">sources<span class="sp"> </span>primaires<span class="sp"> </span>(actes<span class="sp"> </span>de<span class="sp"> </span>naissance<span class="sp"> </span>des</div>
<div class="ln" style="left:737px;top:822.64px">registres<span class="sp"> </span>paroissiaux<span class="sp"> </span>et<span class="sp"> </span>de<span class="sp"> </span>l’état<span class="sp"> </span>civil,</div>
<div class="ln" style="left:737px;top:843.01px">registres<span class="sp"> </span>matricules,<span class="sp"> </span>listes<span class="sp"> </span>de<span class="sp"> </span>conscription,</div>
<div class="ln" style="left:737px;top:863.38px">extraits<span class="sp"> </span>mortuaires)<span class="sp"> </span>permettant<span class="sp"> </span>de<span class="sp"> </span>valider</div>
<div class="ln" style="left:737px;top:883.75px">les<span class="sp"> </span>listes<span class="sp"> </span>précédentes<span class="sp"> </span>et<span class="sp"> </span>de<span class="sp"> </span>les<span class="sp"> </span>compléter</div>
<div class="ln" style="left:1076px;top:174.13px">de<span class="sp"> </span>données<span class="sp"> </span>des<span class="sp"> </span>Médaillés<span class="sp"> </span>de<span class="sp"> </span>Sainte-</div>
<div class="ln" style="left:1076px;top:194.50px">Hélène,<span class="sp"> </span>base<span class="sp"> </span>de<span class="sp"> </span>données<span class="sp"> </span>Léonore<span class="sp"> </span>de<span class="sp"> </span>la</div>
<div class="ln" style="left:1076px;top:214.87px">Légion<span class="sp"> </span>d’honneur,<span class="sp"> </span>base<span class="sp"> </span>de<span class="sp"> </span>données</div>
<div class="ln" style="left:1076px;top:235.24px">généalogiques…)<span class="sp"> </span>apportaient<span class="sp"> </span>de</div>
<div class="ln" style="left:1076px;top:255.61px">nouveaux<span class="sp"> </span>noms<span class="sp"> </span>ou<span class="sp"> </span>des<span class="sp"> </span>informations</div>
<div class="ln" style="left:1076px;top:275.98px">supplémentaires.<span class="sp"> </span>S’y<span class="sp"> </span>ajoutent<span class="sp"> </span>enfin<span class="sp"> </span>des</div>
<div class="ln" style="left:1076px;top:296.35px;word-spacing:-0.48px">informations<span class="sp"> </span>plus<span class="sp"> </span>spécialisées,<span class="sp"> </span>de<span class="sp"> </span>nature<span class="sp"> </span>à</div>
<div class="ln" style="left:1076px;top:316.72px">préciser<span class="sp"> </span>le<span class="sp"> </span>parcours<span class="sp"> </span>des<span class="sp"> </span>unités<span class="sp"> </span>dans</div>
<div class="ln" style="left:1076px;top:337.09px">lesquelles<span class="sp"> </span>ont<span class="sp"> </span>servi<span class="sp"> </span>ces<span class="sp"> </span>conscrits<span class="sp"> </span>et<span class="sp"> </span>donc</div>
<div class="ln" style="left:1076px;top:357.46px">de<span class="sp"> </span>mieux<span class="sp"> </span>cerner<span class="sp"> </span>leur<span class="sp"> </span>trajet<span class="sp"> </span>personnel</div>
<div class="ln ll" style="left:1076px;top:377.83px">(D<s>IGBY</s><span class="sp"> </span>S<s>MITH</s>,<span class="sp"> </span>P<s>IGEARD</s>,<span class="sp"> </span>…).<b class="pm">¶</b></div>
<div class="ln" style="left:1076px;top:416.73px">Le<span class="sp"> </span>résultat<span class="sp"> </span>permettait<span class="sp"> </span>d’exclure<span class="sp"> </span>de<span class="sp"> </span>la<span class="sp"> </span>liste</div>
<div class="ln" style="left:1076px;top:437.10px">originale<span class="sp"> </span>38<span class="sp"> </span>noms<span class="sp"> </span>de<span class="sp"> </span>soldats<span class="sp"> </span>nés<span class="sp"> </span>dans<span class="sp"> </span>le</div>
<div class="ln" style="left:1076px;top:457.47px">canton<span class="sp"> </span>de<span class="sp"> </span>Thuin,<span class="sp"> </span>mais<span class="sp"> </span>pas<span class="sp"> </span>dans<span class="sp"> </span>la<span class="sp"> </span>ville</div>
<div class="ln" style="left:1076px;top:477.84px;word-spacing:-0.88px">même,<span class="sp"> </span>objet<span class="sp"> </span>de<span class="sp"> </span>notre<span class="sp"> </span>recherche<span class="sp"> </span>tandis<span class="sp"> </span>que</div>
<div class="ln" style="left:1076px;top:498.21px">22<span class="sp"> </span>nouveaux<span class="sp"> </span>venaient<span class="sp"> </span>s’y<span class="sp"> </span>ajouter.<span class="sp"> </span>Nous</div>
<div class="ln" style="left:1076px;top:518.58px">arrivons<span class="sp"> </span>donc<span class="sp"> </span>à<span class="sp"> </span>identifier<span class="sp"> </span>223<span class="sp"> </span>militaires,</div>
<div class="ln" style="left:1076px;top:538.95px">dûment<span class="sp"> </span>validés<span class="sp"> </span>par<span class="sp"> </span>un<span class="sp"> </span>acte<span class="sp"> </span>de<span class="sp"> </span>naissance.</div>
<div class="ln" style="left:1076px;top:559.32px">Cette<span class="sp"> </span>liste<span class="sp"> </span>n’est<span class="sp"> </span>certainement<span class="sp"> </span>pas</div>
<div class="ln" style="left:1076px;top:579.69px">exhaustive<u>2</u><span class="sp"> </span>et<span class="sp"> </span>bien<span class="sp"> </span>des<span class="sp"> </span>informations<span class="sp"> </span>sont</div>
<div class="ln" style="left:1076px;top:600.06px">encore<span class="sp"> </span>manquantes.<span class="sp"> </span>La<span class="sp"> </span>recherche<span class="sp"> </span>et</div>
<div class="ln" style="left:1076px;top:620.43px">l’identification<span class="sp"> </span>d’un<span class="sp"> </span>soldat<span class="sp"> </span>au<span class="sp"> </span>sein<span class="sp"> </span>d’un</div>
<div class="ln" style="left:1076px;top:640.80px">registre<span class="sp"> </span>régimentaire<span class="sp"> </span>présentent<span class="sp"> </span>bien<span class="sp"> </span>des</div>
<div class="ln" style="left:1076px;top:661.17px">obstacles<span class="sp"> </span>:<span class="sp"> </span>la<span class="sp"> </span>méconnaissance<span class="sp"> </span>de<span class="sp"> </span>la<span class="sp"> </span>date</div>
<div class="ln" style="left:1076px;top:681.54px">d’arrivée<span class="sp"> </span>au<span class="sp"> </span>régiment,<span class="sp"> </span>la<span class="sp"> </span>graphie</div>
<div class="ln" style="left:1076px;top:701.91px;word-spacing:-0.28px">phonétique<span class="sp"> </span>du<span class="sp"> </span>nom<span class="sp"> </span>de<span class="sp"> </span>l’individu<u>3</u><span class="sp"> </span>et<span class="sp"> </span>de<span class="sp"> </span>son</div>
<div class="ln" style="left:1076px;top:722.28px">lieu<span class="sp"> </span>de<span class="sp"> </span>naissance,<span class="sp"> </span>l’utilisation<span class="sp"> </span>de<span class="sp"> </span>prénoms</div>
<div class="ln" style="left:1076px;top:742.65px">différents<u>4</u>,<span class="sp"> </span>la<span class="sp"> </span>date<span class="sp"> </span>de<span class="sp"> </span>naissance<span class="sp"> </span>très</div>
<div class="ln" style="left:1076px;top:763.02px">souvent<span class="sp"> </span>erronée,<span class="sp"> </span>etc.,<span class="sp"> </span>ne<span class="sp"> </span>permettant<span class="sp"> </span>pas</div>
<div class="ln" style="left:1076px;top:783.39px;word-spacing:-0.24px">toujours<span class="sp"> </span>de<span class="sp"> </span>retrouver<span class="sp"> </span>cet<span class="sp"> </span>homme.<span class="sp"> </span>Même<span class="sp"> </span>la</div>
<div class="ln" style="left:1076px;top:803.76px">taille<span class="sp"> </span>mesurée<span class="sp"> </span>lors<span class="sp"> </span>d’arrivée<span class="sp"> </span>au<span class="sp"> </span>régiment</div>
<div class="ln" style="left:1076px;top:824.13px">n’est<span class="sp"> </span>pas<span class="sp"> </span>fiable<span class="sp"> </span>entre<span class="sp"> </span>les<span class="sp"> </span>mesures<span class="sp"> </span>prises</div>
</div>
<div class="a" style="left:990px;top:479px;width:1.5px;height:19px;background:#000"></div>
<!-- footnote -->
<div class="a" style="left:1076px;top:859.5px;width:48px;height:1px;background:#444"></div>
<div class="fnl" style="left:1076px;top:867px;word-spacing:-0.61px"><u class="fs">2</u> J. Rombeau écrivait déjà dans son rapport : <i>il se pourrait</i></div>
<div class="fnl" style="left:1076px;top:887px"><i>que ce relevé soit incomplet, vu les tripotages et le</i></div>
<!-- rulers -->
<div class="a" style="left:244px;top:52px;width:1380px;height:21px;background:rgba(68,68,68,0.79)"></div>
<div class="a" style="left:244px;top:51px;width:1380px;height:1.5px;background:#262626"></div><div class="a" style="left:509px;top:52.5px;width:887px;height:2px;background:#4a5a6e"></div><div class="a" style="left:736.3px;top:53px;width:1.5px;height:20px;background:#4a5a6e"></div><div class="a" style="left:1056.3px;top:53px;width:1.5px;height:20px;background:#4a5a6e"></div><div class="a" style="left:1075.3px;top:53px;width:1.5px;height:20px;background:#4a5a6e"></div><div class="a" style="left:1395.3px;top:53px;width:1.5px;height:20px;background:#4a5a6e"></div><div class="a" style="left:1070px;top:53px;width:1.4px;height:21px;background:#1e90f0"></div><svg class="a" style="left:1062px;top:52px" width="10" height="8"><path d="M1.5 6 L5 2.5 L8.5 6" stroke="#4a5a6e" stroke-width="1.3" fill="none"/></svg><svg class="a" style="left:1391px;top:52px" width="10" height="8"><path d="M1.5 6 L5 2.5 L8.5 6" stroke="#4a5a6e" stroke-width="1.3" fill="none"/></svg>
<div class="a" style="left:600.5px;top:57.5px;width:5px;height:5px;border-radius:50%;background:#4a4a4a"></div>
<div class="a" style="left:903.5px;top:57.5px;width:5px;height:5px;border-radius:50%;background:#4a4a4a"></div>
<div class="a" style="left:244px;top:73px;width:20px;height:834px;background:#3c3c3c"></div>
<div class="t" style="left:247px;top:56px;font-size:9.5px;color:#c8c8c8">mm</div>
<svg class="a" style="left:0;top:0" width="1907" height="930" viewBox="0 0 1907 930">
<path d="M264.5 71.2V73 M269.3 71.2V73 M274.2 69.0V73 M279.0 71.2V73 M283.8 71.2V73 M288.6 71.2V73 M293.4 69.0V73 M298.2 71.2V73 M303.0 71.2V73 M307.9 71.2V73 M312.7 69.0V73 M317.5 71.2V73 M322.3 71.2V73 M327.1 71.2V73 M331.9 69.0V73 M336.8 71.2V73 M341.6 71.2V73 M346.4 71.2V73 M351.2 64.5V73 M356.0 71.2V73 M360.8 71.2V73 M365.6 71.2V73 M370.5 69.0V73 M375.3 71.2V73 M380.1 71.2V73 M384.9 71.2V73 M389.7 69.0V73 M394.5 71.2V73 M399.4 71.2V73 M404.2 71.2V73 M409.0 69.0V73 M413.8 71.2V73 M418.6 71.2V73 M423.4 71.2V73 M428.2 69.0V73 M433.1 71.2V73 M437.9 71.2V73 M442.7 71.2V73 M447.5 64.5V73 M452.3 71.2V73 M457.1 71.2V73 M461.9 71.2V73 M466.8 69.0V73 M471.6 71.2V73 M476.4 71.2V73 M481.2 71.2V73 M486.0 69.0V73 M490.8 71.2V73 M495.6 71.2V73 M500.5 71.2V73 M505.3 69.0V73 M510.1 71.2V73 M514.9 71.2V73 M519.7 71.2V73 M524.5 69.0V73 M529.4 71.2V73 M534.2 71.2V73 M539.0 71.2V73 M543.8 64.5V73 M548.6 71.2V73 M553.4 71.2V73 M558.2 71.2V73 M563.1 69.0V73 M567.9 71.2V73 M572.7 71.2V73 M577.5 71.2V73 M582.3 69.0V73 M587.1 71.2V73 M592.0 71.2V73 M596.8 71.2V73 M601.6 69.0V73 M606.4 71.2V73 M611.2 71.2V73 M616.0 71.2V73 M620.8 69.0V73 M625.7 71.2V73 M630.5 71.2V73 M635.3 71.2V73 M640.1 64.5V73 M644.9 71.2V73 M649.7 71.2V73 M654.5 71.2V73 M659.4 69.0V73 M664.2 71.2V73 M669.0 71.2V73 M673.8 71.2V73 M678.6 69.0V73 M683.4 71.2V73 M688.2 71.2V73 M693.1 71.2V73 M697.9 69.0V73 M702.7 71.2V73 M707.5 71.2V73 M712.3 71.2V73 M717.1 69.0V73 M722.0 71.2V73 M726.8 71.2V73 M731.6 71.2V73 M736.4 64.5V73 M741.2 71.2V73 M746.0 71.2V73 M750.8 71.2V73 M755.7 69.0V73 M760.5 71.2V73 M765.3 71.2V73 M770.1 71.2V73 M774.9 69.0V73 M779.7 71.2V73 M784.5 71.2V73 M789.4 71.2V73 M794.2 69.0V73 M799.0 71.2V73 M803.8 71.2V73 M808.6 71.2V73 M813.4 69.0V73 M818.3 71.2V73 M823.1 71.2V73 M827.9 71.2V73 M832.7 64.5V73 M837.5 71.2V73 M842.3 71.2V73 M847.1 71.2V73 M852.0 69.0V73 M856.8 71.2V73 M861.6 71.2V73 M866.4 71.2V73 M871.2 69.0V73 M876.0 71.2V73 M880.9 71.2V73 M885.7 71.2V73 M890.5 69.0V73 M895.3 71.2V73 M900.1 71.2V73 M904.9 71.2V73 M909.7 69.0V73 M914.6 71.2V73 M919.4 71.2V73 M924.2 71.2V73 M929.0 64.5V73 M933.8 71.2V73 M938.6 71.2V73 M943.4 71.2V73 M948.3 69.0V73 M953.1 71.2V73 M957.9 71.2V73 M962.7 71.2V73 M967.5 69.0V73 M972.3 71.2V73 M977.2 71.2V73 M982.0 71.2V73 M986.8 69.0V73 M991.6 71.2V73 M996.4 71.2V73 M1001.2 71.2V73 M1006.0 69.0V73 M1010.9 71.2V73 M1015.7 71.2V73 M1020.5 71.2V73 M1025.3 64.5V73 M1030.1 71.2V73 M1034.9 71.2V73 M1039.7 71.2V73 M1044.6 69.0V73 M1049.4 71.2V73 M1054.2 71.2V73 M1059.0 71.2V73 M1063.8 69.0V73 M1068.6 71.2V73 M1073.5 71.2V73 M1078.3 71.2V73 M1083.1 69.0V73 M1087.9 71.2V73 M1092.7 71.2V73 M1097.5 71.2V73 M1102.3 69.0V73 M1107.2 71.2V73 M1112.0 71.2V73 M1116.8 71.2V73 M1121.6 64.5V73 M1126.4 71.2V73 M1131.2 71.2V73 M1136.0 71.2V73 M1140.9 69.0V73 M1145.7 71.2V73 M1150.5 71.2V73 M1155.3 71.2V73 M1160.1 69.0V73 M1164.9 71.2V73 M1169.8 71.2V73 M1174.6 71.2V73 M1179.4 69.0V73 M1184.2 71.2V73 M1189.0 71.2V73 M1193.8 71.2V73 M1198.6 69.0V73 M1203.5 71.2V73 M1208.3 71.2V73 M1213.1 71.2V73 M1217.9 64.5V73 M1222.7 71.2V73 M1227.5 71.2V73 M1232.3 71.2V73 M1237.2 69.0V73 M1242.0 71.2V73 M1246.8 71.2V73 M1251.6 71.2V73 M1256.4 69.0V73 M1261.2 71.2V73 M1266.1 71.2V73 M1270.9 71.2V73 M1275.7 69.0V73 M1280.5 71.2V73 M1285.3 71.2V73 M1290.1 71.2V73 M1294.9 69.0V73 M1299.8 71.2V73 M1304.6 71.2V73 M1309.4 71.2V73 M1314.2 64.5V73 M1319.0 71.2V73 M1323.8 71.2V73 M1328.6 71.2V73 M1333.5 69.0V73 M1338.3 71.2V73 M1343.1 71.2V73 M1347.9 71.2V73 M1352.7 69.0V73 M1357.5 71.2V73 M1362.3 71.2V73 M1367.2 71.2V73 M1372.0 69.0V73 M1376.8 71.2V73 M1381.6 71.2V73 M1386.4 71.2V73 M1391.2 69.0V73 M1396.1 71.2V73 M1400.9 71.2V73 M1405.7 71.2V73 M1410.5 64.5V73 M1415.3 71.2V73 M1420.1 71.2V73 M1424.9 71.2V73 M1429.8 69.0V73 M1434.6 71.2V73 M1439.4 71.2V73 M1444.2 71.2V73 M1449.0 69.0V73 M1453.8 71.2V73 M1458.7 71.2V73 M1463.5 71.2V73 M1468.3 69.0V73 M1473.1 71.2V73 M1477.9 71.2V73 M1482.7 71.2V73 M1487.5 69.0V73 M1492.4 71.2V73 M1497.2 71.2V73 M1502.0 71.2V73 M1506.8 64.5V73 M1511.6 71.2V73 M1516.4 71.2V73 M1521.2 71.2V73 M1526.1 69.0V73 M1530.9 71.2V73 M1535.7 71.2V73 M1540.5 71.2V73 M1545.3 69.0V73 M1550.1 71.2V73 M1555.0 71.2V73 M1559.8 71.2V73 M1564.6 69.0V73 M1569.4 71.2V73 M1574.2 71.2V73 M1579.0 71.2V73 M1583.8 69.0V73 M1588.7 71.2V73 M1593.5 71.2V73 M1598.3 71.2V73 M1603.1 64.5V73 M1607.9 71.2V73 M1612.7 71.2V73 M1617.5 71.2V73" stroke="#dcdcdc" stroke-width="1.1"/>
<g font-family="Liberation Sans" font-size="9.5" fill="#cfcfcf"><text x="351.2" y="62.5" text-anchor="middle">-20</text><text x="447.5" y="62.5" text-anchor="middle">0</text><text x="543.8" y="62.5" text-anchor="middle">20</text><text x="640.1" y="62.5" text-anchor="middle">40</text><text x="736.4" y="62.5" text-anchor="middle">60</text><text x="832.7" y="62.5" text-anchor="middle">80</text><text x="929.0" y="62.5" text-anchor="middle">100</text><text x="1025.3" y="62.5" text-anchor="middle">120</text><text x="1121.6" y="62.5" text-anchor="middle">140</text><text x="1217.9" y="62.5" text-anchor="middle">160</text><text x="1314.2" y="62.5" text-anchor="middle">180</text><text x="1410.5" y="62.5" text-anchor="middle">200</text><text x="1506.8" y="62.5" text-anchor="middle">220</text><text x="1603.1" y="62.5" text-anchor="middle">240</text></g>
<path d="M262.2 73.4H264 M262.2 78.2H264 M262.2 83.0H264 M260.0 87.9H264 M262.2 92.7H264 M262.2 97.5H264 M262.2 102.4H264 M260.0 107.2H264 M262.2 112.0H264 M262.2 116.8H264 M262.2 121.7H264 M255.5 126.5H264 M262.2 131.3H264 M262.2 136.2H264 M262.2 141.0H264 M260.0 145.8H264 M262.2 150.6H264 M262.2 155.5H264 M262.2 160.3H264 M260.0 165.1H264 M262.2 170.0H264 M262.2 174.8H264 M262.2 179.6H264 M260.0 184.5H264 M262.2 189.3H264 M262.2 194.1H264 M262.2 198.9H264 M260.0 203.8H264 M262.2 208.6H264 M262.2 213.4H264 M262.2 218.3H264 M255.5 223.1H264 M262.2 227.9H264 M262.2 232.8H264 M262.2 237.6H264 M260.0 242.4H264 M262.2 247.2H264 M262.2 252.1H264 M262.2 256.9H264 M260.0 261.7H264 M262.2 266.6H264 M262.2 271.4H264 M262.2 276.2H264 M260.0 281.1H264 M262.2 285.9H264 M262.2 290.7H264 M262.2 295.6H264 M260.0 300.4H264 M262.2 305.2H264 M262.2 310.0H264 M262.2 314.9H264 M255.5 319.7H264 M262.2 324.5H264 M262.2 329.4H264 M262.2 334.2H264 M260.0 339.0H264 M262.2 343.9H264 M262.2 348.7H264 M262.2 353.5H264 M260.0 358.3H264 M262.2 363.2H264 M262.2 368.0H264 M262.2 372.8H264 M260.0 377.7H264 M262.2 382.5H264 M262.2 387.3H264 M262.2 392.2H264 M260.0 397.0H264 M262.2 401.8H264 M262.2 406.6H264 M262.2 411.5H264 M255.5 416.3H264 M262.2 421.1H264 M262.2 426.0H264 M262.2 430.8H264 M260.0 435.6H264 M262.2 440.5H264 M262.2 445.3H264 M262.2 450.1H264 M260.0 454.9H264 M262.2 459.8H264 M262.2 464.6H264 M262.2 469.4H264 M260.0 474.3H264 M262.2 479.1H264 M262.2 483.9H264 M262.2 488.8H264 M260.0 493.6H264 M262.2 498.4H264 M262.2 503.2H264 M262.2 508.1H264 M255.5 512.9H264 M262.2 517.7H264 M262.2 522.6H264 M262.2 527.4H264 M260.0 532.2H264 M262.2 537.0H264 M262.2 541.9H264 M262.2 546.7H264 M260.0 551.5H264 M262.2 556.4H264 M262.2 561.2H264 M262.2 566.0H264 M260.0 570.9H264 M262.2 575.7H264 M262.2 580.5H264 M262.2 585.3H264 M260.0 590.2H264 M262.2 595.0H264 M262.2 599.8H264 M262.2 604.7H264 M255.5 609.5H264 M262.2 614.3H264 M262.2 619.2H264 M262.2 624.0H264 M260.0 628.8H264 M262.2 633.6H264 M262.2 638.5H264 M262.2 643.3H264 M260.0 648.1H264 M262.2 653.0H264 M262.2 657.8H264 M262.2 662.6H264 M260.0 667.5H264 M262.2 672.3H264 M262.2 677.1H264 M262.2 681.9H264 M260.0 686.8H264 M262.2 691.6H264 M262.2 696.4H264 M262.2 701.3H264 M255.5 706.1H264 M262.2 710.9H264 M262.2 715.8H264 M262.2 720.6H264 M260.0 725.4H264 M262.2 730.2H264 M262.2 735.1H264 M262.2 739.9H264 M260.0 744.7H264 M262.2 749.6H264 M262.2 754.4H264 M262.2 759.2H264 M260.0 764.1H264 M262.2 768.9H264 M262.2 773.7H264 M262.2 778.5H264 M260.0 783.4H264 M262.2 788.2H264 M262.2 793.0H264 M262.2 797.9H264 M255.5 802.7H264 M262.2 807.5H264 M262.2 812.4H264 M262.2 817.2H264 M260.0 822.0H264 M262.2 826.9H264 M262.2 831.7H264 M262.2 836.5H264 M260.0 841.3H264 M262.2 846.2H264 M262.2 851.0H264 M262.2 855.8H264 M260.0 860.7H264 M262.2 865.5H264 M262.2 870.3H264 M262.2 875.1H264 M260.0 880.0H264 M262.2 884.8H264 M262.2 889.6H264 M262.2 894.5H264 M255.5 899.3H264 M262.2 904.1H264" stroke="#dcdcdc" stroke-width="1.1"/>
<g font-family="Liberation Sans" font-size="9.5" fill="#cfcfcf"><text transform="translate(254 126.5) rotate(-90)" text-anchor="middle">40</text><text transform="translate(254 223.1) rotate(-90)" text-anchor="middle">60</text><text transform="translate(254 319.7) rotate(-90)" text-anchor="middle">80</text><text transform="translate(254 416.3) rotate(-90)" text-anchor="middle">100</text><text transform="translate(254 512.9) rotate(-90)" text-anchor="middle">120</text><text transform="translate(254 609.5) rotate(-90)" text-anchor="middle">140</text><text transform="translate(254 706.1) rotate(-90)" text-anchor="middle">160</text><text transform="translate(254 802.7) rotate(-90)" text-anchor="middle">180</text><text transform="translate(254 899.3) rotate(-90)" text-anchor="middle">200</text></g>
</svg>
<div class="a" style="left:244px;top:902.5px;width:20px;height:1.5px;background:#2a8ae8"></div>
<!-- v scrollbar -->
<div class="a" style="left:1624px;top:52px;width:17px;height:873px;background:#3a3a3a"></div>
<div class="a" style="left:1629px;top:58px;width:0;height:0;border-left:4.5px solid transparent;border-right:4.5px solid transparent;border-bottom:7px solid #858585"></div>
<div class="a" style="left:1629px;top:894px;width:0;height:0;border-left:4.5px solid transparent;border-right:4.5px solid transparent;border-top:7px solid #858585"></div>
<div class="a" style="left:1630px;top:265px;width:7px;height:29px;background:#7a7a7a;border-radius:4px"></div>
<!-- h scrollbar -->
<div class="a" style="left:244px;top:907px;width:1380px;height:18px;background:#3c3c3c"></div>
<div class="a" style="left:716px;top:913px;width:416px;height:7px;background:#7a7a7a;border-radius:4px"></div>
<div class="a" style="left:250px;top:912px;width:0;height:0;border-top:4.5px solid transparent;border-bottom:4.5px solid transparent;border-right:7px solid #858585"></div>
<div class="a" style="left:1612px;top:912px;width:0;height:0;border-top:4.5px solid transparent;border-bottom:4.5px solid transparent;border-left:7px solid #858585"></div>

<!-- ============ RIGHT PANEL ============ -->
<div id="right" class="a" style="left:1647px;top:26px;width:260px;height:899px;background:#333"></div>
<div class="a" style="left:1647px;top:26px;width:260px;height:29px;background:#282828"></div>
<div class="a" style="left:1707px;top:27px;width:55px;height:28px;background:#333"></div>
<div class="a" style="left:1655px;top:35px;width:1px;height:8px;background:#666"></div><div class="a" style="left:1658px;top:35px;width:1px;height:8px;background:#666"></div>
<div class="t" style="left:1670px;top:32px;font-size:11px;color:#d0d0d0">Colour</div>
<div class="t" style="left:1712px;top:32px;font-size:11px">Swatches</div>
<div class="t" style="left:1767px;top:32px;font-size:11px;color:#d0d0d0">Stroke</div>
<div class="a" style="left:1899px;top:34px;width:9px;height:10px;background:repeating-linear-gradient(to bottom,#ddd 0 1.7px,transparent 1.7px 4px)"></div>
<div class="a" style="left:1647px;top:55px;width:260px;height:59px;background:#373737"></div>
<svg class="a" style="left:1647px;top:55px" width="260" height="60">
  <circle cx="27" cy="28" r="9" fill="none" stroke="#eee" stroke-width="4"/>
  <path d="M31.5 20.2 A9 9 0 0 1 35.9 26" stroke="#e23030" stroke-width="4" fill="none" stroke-dasharray="3 2"/>
  <path d="M19 33 A9 9 0 0 0 21 35" stroke="#e23030" stroke-width="4" fill="none"/>
  <circle cx="27" cy="28" r="11.5" fill="none" stroke="#2c2c2c" stroke-width="1"/>
  <circle cx="40" cy="41.5" r="11.5" fill="#000" stroke="#4a4a4a" stroke-width="1.5"/>
  <circle cx="21.5" cy="47.5" r="5.5" fill="#ddd" stroke="#444" stroke-width="1"/>
  <path d="M18 51 L25 44" stroke="#e03030" stroke-width="1.5"/>
  <path d="M43 18 Q49 20 50 27" stroke="#bbb" stroke-width="1" fill="none"/>
  <path d="M43 18 l2.5 -1.5 M43 18 l2 2 M50 27 l-2 -1.5 M50 27 l1.5 -2.2" stroke="#bbb" stroke-width="1"/>
  <path d="M64 33 L76 21" stroke="#cfcfcf" stroke-width="2.2"/>
  <circle cx="77" cy="19.5" r="3.5" fill="#c08a60"/>
  <circle cx="90" cy="24" r="7.5" fill="#e31c1c" stroke="#444" stroke-width="1.2"/>
</svg>
<div class="t" style="left:1803px;top:81px;font-size:11.2px;color:#c8c8c8">Opacity:</div>
<div class="a inp" style="left:1847px;top:78px;width:62px;height:20px"></div>
<div class="t" style="left:1853px;top:81px;font-size:11.5px">100 %</div>
<div class="chev" style="left:1896px;top:82px"></div>
<div class="t" style="left:1657px;top:122px;font-size:11px;color:#c8c8c8">Recent:</div>
<div class="a dd" style="left:1658px;top:144px;width:146px;height:22px"></div>
<svg class="a" style="left:1662px;top:147px" width="16" height="16"><g fill="none" stroke="#ccc" stroke-width="1.2"><rect x="2" y="7" width="6" height="4" rx="2" transform="rotate(-45 5 9)"/><rect x="7" y="3" width="6" height="4" rx="2" transform="rotate(-45 10 5)"/></g></svg>
<div class="t" style="left:1682px;top:148px;font-size:12px">Colours</div>
<div class="chev" style="left:1792px;top:150px"></div>
<svg class="a" style="left:1807px;top:146px" width="16" height="16"><g fill="#ccc"><rect x="1" y="1" width="5" height="5" rx="1"/><rect x="1" y="9" width="5" height="5" rx="1"/><rect x="9" y="9" width="5" height="5" rx="1"/></g><path d="M11.5 1v6M8.5 4h6" stroke="#ddd" stroke-width="1.1"/></svg>
<svg class="a" style="left:0;top:0" width="1907" height="930">
 <defs><linearGradient id="gr1"><stop offset="0" stop-color="#fff"/><stop offset="1" stop-color="#999"/></linearGradient></defs>
 <rect x="1700.5" y="123.5" width="140.3" height="14" fill="#000"/><rect x="1701.3" y="124.3" width="12.5" height="12.4" fill="#0f3d12"/><rect x="1715.3" y="124.3" width="12.5" height="12.4" fill="#fff"/><path d="M1715.8 136.5 L1727.8 124.5" stroke="#e02020" stroke-width="1.5"/><rect x="1729.4" y="124.3" width="12.5" height="12.4" fill="#f2ad00"/><rect x="1743.4" y="124.3" width="12.5" height="12.4" fill="#801800"/><rect x="1757.4" y="124.3" width="12.5" height="12.4" fill="url(#gr1)"/><rect x="1771.5" y="124.3" width="12.5" height="12.4" fill="#a87a1a"/><rect x="1785.5" y="124.3" width="12.5" height="12.4" fill="#020202"/><rect x="1799.5" y="124.3" width="12.5" height="12.4" fill="#e8e8e8"/><rect x="1813.5" y="124.3" width="12.5" height="12.4" fill="#1e1e1e"/><rect x="1827.6" y="124.3" width="12.5" height="12.4" fill="#ffffff"/>
 <rect x="1845" y="147" width="57" height="14.5" fill="#000"/>
 <rect x="1846" y="148" width="12.5" height="12.5" fill="#fff"/><path d="M1846.5 160.5 L1858.5 148.5" stroke="#e02020" stroke-width="1.5"/>
 <rect x="1860" y="148" width="13" height="12.5" fill="#1e1e1e"/>
 <rect x="1874" y="148" width="13" height="12.5" fill="#9a9a9a"/>
 <rect x="1888" y="148" width="13" height="12.5" fill="#fff"/>
 <rect x="1657.2" y="175" width="238.5" height="126.3" fill="#000"/><rect x="1657.2" y="301.3" width="56.1" height="14.0" fill="#000"/><rect x="1658.20" y="176.00" width="12.83" height="12.83" fill="#0f3d12"/><rect x="1672.23" y="176.00" width="12.83" height="12.83" fill="#861800"/><rect x="1686.26" y="176.00" width="12.83" height="12.83" fill="#a47018"/><rect x="1700.29" y="176.00" width="12.83" height="12.83" fill="#a47018"/><rect x="1714.32" y="176.00" width="12.83" height="12.83" fill="#e52222"/><rect x="1728.35" y="176.00" width="12.83" height="12.83" fill="#ee5f1a"/><rect x="1742.38" y="176.00" width="12.83" height="12.83" fill="#f4b000"/><rect x="1756.41" y="176.00" width="12.83" height="12.83" fill="#e0dc1a"/><rect x="1770.44" y="176.00" width="12.83" height="12.83" fill="#9cc21f"/><rect x="1784.47" y="176.00" width="12.83" height="12.83" fill="#6ab031"/><rect x="1798.50" y="176.00" width="12.83" height="12.83" fill="#5cad30"/><rect x="1812.53" y="176.00" width="12.83" height="12.83" fill="#66b866"/><rect x="1826.56" y="176.00" width="12.83" height="12.83" fill="#66c0b0"/><rect x="1840.59" y="176.00" width="12.83" height="12.83" fill="#40bde6"/><rect x="1854.62" y="176.00" width="12.83" height="12.83" fill="#3a70b8"/><rect x="1868.65" y="176.00" width="12.83" height="12.83" fill="#2b4a98"/><rect x="1882.68" y="176.00" width="12.83" height="12.83" fill="#3a4090"/><rect x="1658.20" y="190.03" width="12.83" height="12.83" fill="#6a4598"/><rect x="1672.23" y="190.03" width="12.83" height="12.83" fill="#9a4898"/><rect x="1686.26" y="190.03" width="12.83" height="12.83" fill="#d04898"/><rect x="1700.29" y="190.03" width="12.83" height="12.83" fill="#e81e6a"/><rect x="1714.32" y="190.03" width="12.83" height="12.83" fill="#e52222"/><rect x="1728.35" y="190.03" width="12.83" height="12.83" fill="#ea6020"/><rect x="1742.38" y="190.03" width="12.83" height="12.83" fill="#eca81e"/><rect x="1756.41" y="190.03" width="12.83" height="12.83" fill="#e0dc2a"/><rect x="1770.44" y="190.03" width="12.83" height="12.83" fill="#9cc21f"/><rect x="1784.47" y="190.03" width="12.83" height="12.83" fill="#6ab031"/><rect x="1798.50" y="190.03" width="12.83" height="12.83" fill="#5aad30"/><rect x="1812.53" y="190.03" width="12.83" height="12.83" fill="#66b866"/><rect x="1826.56" y="190.03" width="12.83" height="12.83" fill="#5ec0a8"/><rect x="1840.59" y="190.03" width="12.83" height="12.83" fill="#30bce0"/><rect x="1854.62" y="190.03" width="12.83" height="12.83" fill="#3a70b8"/><rect x="1868.65" y="190.03" width="12.83" height="12.83" fill="#2a4a98"/><rect x="1882.68" y="190.03" width="12.83" height="12.83" fill="#3a4090"/><rect x="1658.20" y="204.06" width="12.83" height="12.83" fill="#6b4798"/><rect x="1672.23" y="204.06" width="12.83" height="12.83" fill="#9a4998"/><rect x="1686.26" y="204.06" width="12.83" height="12.83" fill="#ce4998"/><rect x="1700.29" y="204.06" width="12.83" height="12.83" fill="#e5216b"/><rect x="1714.32" y="204.06" width="12.83" height="12.83" fill="#e22525"/><rect x="1728.35" y="204.06" width="12.83" height="12.83" fill="#e66123"/><rect x="1742.38" y="204.06" width="12.83" height="12.83" fill="#e8a721"/><rect x="1756.41" y="204.06" width="12.83" height="12.83" fill="#ddd92d"/><rect x="1770.44" y="204.06" width="12.83" height="12.83" fill="#9bc022"/><rect x="1784.47" y="204.06" width="12.83" height="12.83" fill="#6baf34"/><rect x="1798.50" y="204.06" width="12.83" height="12.83" fill="#5bac33"/><rect x="1812.53" y="204.06" width="12.83" height="12.83" fill="#67b667"/><rect x="1826.56" y="204.06" width="12.83" height="12.83" fill="#5fbea7"/><rect x="1840.59" y="204.06" width="12.83" height="12.83" fill="#32badd"/><rect x="1854.62" y="204.06" width="12.83" height="12.83" fill="#3c71b7"/><rect x="1868.65" y="204.06" width="12.83" height="12.83" fill="#2d4c98"/><rect x="1882.68" y="204.06" width="12.83" height="12.83" fill="#3d4290"/><rect x="1658.20" y="218.09" width="12.83" height="12.83" fill="#6e4a98"/><rect x="1672.23" y="218.09" width="12.83" height="12.83" fill="#994d98"/><rect x="1686.26" y="218.09" width="12.83" height="12.83" fill="#ca4d97"/><rect x="1700.29" y="218.09" width="12.83" height="12.83" fill="#df286d"/><rect x="1714.32" y="218.09" width="12.83" height="12.83" fill="#da2c2c"/><rect x="1728.35" y="218.09" width="12.83" height="12.83" fill="#df632a"/><rect x="1742.38" y="218.09" width="12.83" height="12.83" fill="#e0a429"/><rect x="1756.41" y="218.09" width="12.83" height="12.83" fill="#d6d233"/><rect x="1770.44" y="218.09" width="12.83" height="12.83" fill="#99bb2a"/><rect x="1784.47" y="218.09" width="12.83" height="12.83" fill="#6cab39"/><rect x="1798.50" y="218.09" width="12.83" height="12.83" fill="#5da939"/><rect x="1812.53" y="218.09" width="12.83" height="12.83" fill="#68b369"/><rect x="1826.56" y="218.09" width="12.83" height="12.83" fill="#61baa4"/><rect x="1840.59" y="218.09" width="12.83" height="12.83" fill="#38b6d6"/><rect x="1854.62" y="218.09" width="12.83" height="12.83" fill="#4172b3"/><rect x="1868.65" y="218.09" width="12.83" height="12.83" fill="#334f97"/><rect x="1882.68" y="218.09" width="12.83" height="12.83" fill="#424790"/><rect x="1658.20" y="232.12" width="12.83" height="12.83" fill="#724f98"/><rect x="1672.23" y="232.12" width="12.83" height="12.83" fill="#995198"/><rect x="1686.26" y="232.12" width="12.83" height="12.83" fill="#c35196"/><rect x="1700.29" y="232.12" width="12.83" height="12.83" fill="#d6316f"/><rect x="1714.32" y="232.12" width="12.83" height="12.83" fill="#cf3536"/><rect x="1728.35" y="232.12" width="12.83" height="12.83" fill="#d36635"/><rect x="1742.38" y="232.12" width="12.83" height="12.83" fill="#d59f33"/><rect x="1756.41" y="232.12" width="12.83" height="12.83" fill="#ccc93c"/><rect x="1770.44" y="232.12" width="12.83" height="12.83" fill="#96b534"/><rect x="1784.47" y="232.12" width="12.83" height="12.83" fill="#6da742"/><rect x="1798.50" y="232.12" width="12.83" height="12.83" fill="#60a542"/><rect x="1812.53" y="232.12" width="12.83" height="12.83" fill="#69ad6c"/><rect x="1826.56" y="232.12" width="12.83" height="12.83" fill="#63b3a0"/><rect x="1840.59" y="232.12" width="12.83" height="12.83" fill="#40b0cd"/><rect x="1854.62" y="232.12" width="12.83" height="12.83" fill="#4874af"/><rect x="1868.65" y="232.12" width="12.83" height="12.83" fill="#3c5596"/><rect x="1882.68" y="232.12" width="12.83" height="12.83" fill="#4b4d90"/><rect x="1658.20" y="246.15" width="12.83" height="12.83" fill="#765598"/><rect x="1672.23" y="246.15" width="12.83" height="12.83" fill="#985799"/><rect x="1686.26" y="246.15" width="12.83" height="12.83" fill="#bb5795"/><rect x="1700.29" y="246.15" width="12.83" height="12.83" fill="#ca3e72"/><rect x="1714.32" y="246.15" width="12.83" height="12.83" fill="#c24243"/><rect x="1728.35" y="246.15" width="12.83" height="12.83" fill="#c56a42"/><rect x="1742.38" y="246.15" width="12.83" height="12.83" fill="#c69a41"/><rect x="1756.41" y="246.15" width="12.83" height="12.83" fill="#bfbc48"/><rect x="1770.44" y="246.15" width="12.83" height="12.83" fill="#92ac41"/><rect x="1784.47" y="246.15" width="12.83" height="12.83" fill="#6fa14c"/><rect x="1798.50" y="246.15" width="12.83" height="12.83" fill="#649f4d"/><rect x="1812.53" y="246.15" width="12.83" height="12.83" fill="#6ba670"/><rect x="1826.56" y="246.15" width="12.83" height="12.83" fill="#66ab9c"/><rect x="1840.59" y="246.15" width="12.83" height="12.83" fill="#4aa9c1"/><rect x="1854.62" y="246.15" width="12.83" height="12.83" fill="#5076a9"/><rect x="1868.65" y="246.15" width="12.83" height="12.83" fill="#485c95"/><rect x="1882.68" y="246.15" width="12.83" height="12.83" fill="#555690"/><rect x="1658.20" y="260.18" width="12.83" height="12.83" fill="#7c5c98"/><rect x="1672.23" y="260.18" width="12.83" height="12.83" fill="#975f99"/><rect x="1686.26" y="260.18" width="12.83" height="12.83" fill="#b25f93"/><rect x="1700.29" y="260.18" width="12.83" height="12.83" fill="#bc4c76"/><rect x="1714.32" y="260.18" width="12.83" height="12.83" fill="#b25053"/><rect x="1728.35" y="260.18" width="12.83" height="12.83" fill="#b46f52"/><rect x="1742.38" y="260.18" width="12.83" height="12.83" fill="#b59451"/><rect x="1756.41" y="260.18" width="12.83" height="12.83" fill="#afae56"/><rect x="1770.44" y="260.18" width="12.83" height="12.83" fill="#8da251"/><rect x="1784.47" y="260.18" width="12.83" height="12.83" fill="#729b59"/><rect x="1798.50" y="260.18" width="12.83" height="12.83" fill="#69995a"/><rect x="1812.53" y="260.18" width="12.83" height="12.83" fill="#6e9e75"/><rect x="1826.56" y="260.18" width="12.83" height="12.83" fill="#6aa296"/><rect x="1840.59" y="260.18" width="12.83" height="12.83" fill="#56a0b3"/><rect x="1854.62" y="260.18" width="12.83" height="12.83" fill="#5b79a1"/><rect x="1868.65" y="260.18" width="12.83" height="12.83" fill="#566493"/><rect x="1882.68" y="260.18" width="12.83" height="12.83" fill="#626090"/><rect x="1658.20" y="274.21" width="12.83" height="12.83" fill="#836598"/><rect x="1672.23" y="274.21" width="12.83" height="12.83" fill="#95679a"/><rect x="1686.26" y="274.21" width="12.83" height="12.83" fill="#a66792"/><rect x="1700.29" y="274.21" width="12.83" height="12.83" fill="#ac5d7b"/><rect x="1714.32" y="274.21" width="12.83" height="12.83" fill="#9f6164"/><rect x="1728.35" y="274.21" width="12.83" height="12.83" fill="#a07464"/><rect x="1742.38" y="274.21" width="12.83" height="12.83" fill="#a18c63"/><rect x="1756.41" y="274.21" width="12.83" height="12.83" fill="#9e9d66"/><rect x="1770.44" y="274.21" width="12.83" height="12.83" fill="#889763"/><rect x="1784.47" y="274.21" width="12.83" height="12.83" fill="#759368"/><rect x="1798.50" y="274.21" width="12.83" height="12.83" fill="#6e9269"/><rect x="1812.53" y="274.21" width="12.83" height="12.83" fill="#71957a"/><rect x="1826.56" y="274.21" width="12.83" height="12.83" fill="#6f968f"/><rect x="1840.59" y="274.21" width="12.83" height="12.83" fill="#6496a2"/><rect x="1854.62" y="274.21" width="12.83" height="12.83" fill="#677c99"/><rect x="1868.65" y="274.21" width="12.83" height="12.83" fill="#666d92"/><rect x="1882.68" y="274.21" width="12.83" height="12.83" fill="#706b90"/><rect x="1658.20" y="288.24" width="12.83" height="12.83" fill="#8a6e98"/><rect x="1672.23" y="288.24" width="12.83" height="12.83" fill="#94709a"/><rect x="1686.26" y="288.24" width="12.83" height="12.83" fill="#9a7090"/><rect x="1700.29" y="288.24" width="12.83" height="12.83" fill="#9a7080"/><rect x="1714.32" y="288.24" width="12.83" height="12.83" fill="#8a7478"/><rect x="1728.35" y="288.24" width="12.83" height="12.83" fill="#8a7a78"/><rect x="1742.38" y="288.24" width="12.83" height="12.83" fill="#8a8478"/><rect x="1756.41" y="288.24" width="12.83" height="12.83" fill="#8a8a78"/><rect x="1770.44" y="288.24" width="12.83" height="12.83" fill="#828a78"/><rect x="1784.47" y="288.24" width="12.83" height="12.83" fill="#788a78"/><rect x="1798.50" y="288.24" width="12.83" height="12.83" fill="#748a7a"/><rect x="1812.53" y="288.24" width="12.83" height="12.83" fill="#748a80"/><rect x="1826.56" y="288.24" width="12.83" height="12.83" fill="#748a88"/><rect x="1840.59" y="288.24" width="12.83" height="12.83" fill="#748a90"/><rect x="1854.62" y="288.24" width="12.83" height="12.83" fill="#748090"/><rect x="1868.65" y="288.24" width="12.83" height="12.83" fill="#787890"/><rect x="1882.68" y="288.24" width="12.83" height="12.83" fill="#807890"/><rect x="1658.20" y="302.27" width="12.83" height="12.83" fill="#8a7890"/><rect x="1672.23" y="302.27" width="12.83" height="12.83" fill="#8e7890"/><rect x="1686.26" y="302.27" width="12.83" height="12.83" fill="#907888"/><rect x="1700.29" y="302.27" width="12.83" height="12.83" fill="#907880"/>
</svg>
<div class="a inp" style="left:1657px;top:385px;width:252px;height:20px"></div>
<svg class="a" style="left:1661px;top:388px" width="14" height="14"><circle cx="5.5" cy="5.5" r="4.2" fill="none" stroke="#ccc" stroke-width="1.2"/><path d="M8.5 8.5L12 12" stroke="#ccc" stroke-width="1.3"/></svg>
<div class="t" style="left:1677px;top:388px;font-size:11px;color:#b8b8b8">Search</div>
<!-- text styles panel -->
<div class="a" style="left:1647px;top:411px;width:260px;height:30px;background:#282828"></div>
<div class="a" style="left:1820px;top:413px;width:60px;height:28px;background:#333"></div>
<div class="a" style="left:1655px;top:421px;width:1px;height:8px;background:#666"></div><div class="a" style="left:1658px;top:421px;width:1px;height:8px;background:#666"></div>
<div class="t" style="left:1670px;top:418px;font-size:11px;color:#d0d0d0">Layers</div>
<div class="t" style="left:1710px;top:418px;font-size:11px;color:#d0d0d0">Character</div>
<div class="t" style="left:1766px;top:418px;font-size:11px;color:#d0d0d0">Paragraph</div>
<div class="t" style="left:1825px;top:418px;font-size:11px">Text Styles</div>
<div class="a" style="left:1899px;top:420px;width:9px;height:10px;background:repeating-linear-gradient(to bottom,#ddd 0 1.7px,transparent 1.7px 4px)"></div>
<div class="a" style="left:1651px;top:448px;width:5px;height:5px;border-right:1.2px solid #ccc;border-bottom:1.2px solid #ccc;transform:rotate(45deg)"></div>
<div class="a" style="left:1669px;top:443px;width:206px;height:60px;background:#454545;overflow:hidden">
  <div class="t" style="left:2px;top:3px;font-size:11.2px;line-height:16px;color:#e8e8e8">Normal + Font: Arial; Font size: 10 pt;<br>Leading override: 12 pt; Leading<br>override; Character fill: R:0 G:0 B:0;<br>Justify paragraph: Last line left;</div>
</div>
<div class="a" style="left:1880px;top:443px;width:13px;height:60px;background:#383838"></div>
<div class="a" style="left:1883px;top:449px;width:0;height:0;border-left:3.5px solid transparent;border-right:3.5px solid transparent;border-bottom:6px solid #777"></div>
<div class="a" style="left:1883px;top:460px;width:7px;height:12px;background:#777;border-radius:3px"></div>
<div class="a" style="left:1883px;top:490px;width:0;height:0;border-left:3.5px solid transparent;border-right:3.5px solid transparent;border-top:6px solid #777"></div>
<div class="t" style="left:1897px;top:450px;font-family:'Liberation Serif';font-weight:bold;font-size:13px;color:#ccc">T</div>
<div class="a" style="left:1897px;top:446px;width:10px;height:1px;background:#ccc"></div>
<div class="a" style="left:1647px;top:505px;width:252px;height:30px;background:#2f2f2f"></div><div class="t" style="left:1669px;top:512px;font-size:14px;line-height:16px;color:#e6e6e6">¶</div><div class="t" style="left:1754px;top:512px;line-height:16px;font-family:'Liberation Serif';font-style:italic;font-size:12px;color:#bdbdbd">[No Style]</div><div class="a" style="left:1884px;top:515px;width:8px;height:9px;background:repeating-linear-gradient(to bottom,#d8d8d8 0 1.6px,transparent 1.6px 3.4px)"></div><div class="a" style="left:1647px;top:535px;width:252px;height:30px;background:#363636"></div><div class="t" style="left:1669px;top:542px;font-size:14px;line-height:16px;color:#e6e6e6">¶</div><div class="t" style="left:1681px;top:542px;line-height:16px;font-style:italic;font-size:14px;color:#e0e0e0;letter-spacing:0.2px">Article Abstract</div><div class="a" style="left:1884px;top:545px;width:8px;height:9px;background:repeating-linear-gradient(to bottom,#d8d8d8 0 1.6px,transparent 1.6px 3.4px)"></div><div class="a" style="left:1647px;top:565px;width:252px;height:30px;background:#2f2f2f"></div><div class="t" style="left:1669px;top:572px;font-size:14px;line-height:16px;color:#e6e6e6">¶</div><div class="t" style="left:1740px;top:572px;line-height:16px;font-family:'Liberation Serif';font-size:12.5px;color:#d8d8d8">Article Caption</div><div class="a" style="left:1884px;top:575px;width:8px;height:9px;background:repeating-linear-gradient(to bottom,#d8d8d8 0 1.6px,transparent 1.6px 3.4px)"></div><div class="a" style="left:1649px;top:577px;width:5px;height:5px;border-right:1.2px solid #ccc;border-top:1.2px solid #ccc;transform:rotate(45deg)"></div><div class="a" style="left:1647px;top:595px;width:252px;height:30px;background:#363636"></div><div class="t" style="left:1669px;top:602px;font-size:14px;line-height:16px;color:#e6e6e6">¶</div><div class="t" style="left:1681px;top:602px;line-height:16px;font-size:14.2px;color:#e8e8e8">Article Footnote</div><div class="a" style="left:1884px;top:605px;width:8px;height:9px;background:repeating-linear-gradient(to bottom,#d8d8d8 0 1.6px,transparent 1.6px 3.4px)"></div><div class="a" style="left:1647px;top:625px;width:252px;height:30px;background:#2f2f2f"></div><div class="t" style="left:1669px;top:632px;font-size:14px;line-height:16px;color:#e6e6e6">¶</div><div class="t" style="left:1681px;top:632px;line-height:16px;font-family:'Liberation Serif';font-size:16.5px;color:#e8e8e8">Article Text</div><div class="a" style="left:1884px;top:635px;width:8px;height:9px;background:repeating-linear-gradient(to bottom,#d8d8d8 0 1.6px,transparent 1.6px 3.4px)"></div><div class="a" style="left:1649px;top:637px;width:5px;height:5px;border-right:1.2px solid #ccc;border-top:1.2px solid #ccc;transform:rotate(45deg)"></div><div class="a" style="left:1647px;top:655px;width:252px;height:30px;background:#363636"></div><div class="t" style="left:1669px;top:662px;font-size:14px;line-height:16px;color:#e6e6e6">¶</div><div class="t" style="left:1681px;top:662px;line-height:16px;font-size:14px;color:#e8e8e8;letter-spacing:0.3px">Article Title</div><div class="a" style="left:1884px;top:665px;width:8px;height:9px;background:repeating-linear-gradient(to bottom,#d8d8d8 0 1.6px,transparent 1.6px 3.4px)"></div><div class="a" style="left:1649px;top:667px;width:5px;height:5px;border-right:1.2px solid #ccc;border-top:1.2px solid #ccc;transform:rotate(45deg)"></div><div class="a" style="left:1647px;top:685px;width:252px;height:30px;background:#2f2f2f"></div><div class="t" style="left:1669px;top:692px;font-size:14px;line-height:16px;color:#e6e6e6">¶</div><div class="t" style="left:1681px;top:692px;line-height:16px;font-size:12.2px;color:#d8d8d8;letter-spacing:0.4px">C1 Captions</div><div class="a" style="left:1884px;top:695px;width:8px;height:9px;background:repeating-linear-gradient(to bottom,#d8d8d8 0 1.6px,transparent 1.6px 3.4px)"></div><div class="a" style="left:1647px;top:715px;width:252px;height:24px;background:#363636"></div><div class="t" style="left:1669px;top:722px;font-size:14px;line-height:16px;color:#e6e6e6">¶</div><div class="t" style="left:1748px;top:722px;line-height:16px;font-family:'Liberation Serif';font-size:13.5px;color:#e0e0e0">C4 Caption</div><div class="a" style="left:1884px;top:725px;width:8px;height:9px;background:repeating-linear-gradient(to bottom,#d8d8d8 0 1.6px,transparent 1.6px 3.4px)"></div>
<div class="a" style="left:1899px;top:505px;width:8px;height:234px;background:#2e2e2e"></div>
<div class="a" style="left:1901px;top:525px;width:6px;height:75px;background:#555;border-radius:3px"></div>
<div class="t" style="left:1650px;top:743px;font-size:15px;line-height:18px;color:#bbb"><sup style="font-size:9px">+</sup>¶ <sup style="font-size:9px">+</sup>a <sup style="font-size:9px">+</sup>s</div>
<svg class="a" style="left:1758px;top:742px" width="40" height="20"><g fill="none" stroke="#bbb" stroke-width="1.1"><path d="M3 2h8M3 2l2-1.5M3 2l2 1.5M14 1v14M8 7h5M8 10h5M8 13h5"/><path d="M23 2h8M23 2l2-1.5M23 2l2 1.5M34 1v14M28 7h5M28 10h5M28 13h5" stroke="#888"/></g><text x="1" y="16" font-size="12" fill="#bbb" font-family="Liberation Sans">¶</text><text x="20" y="16" font-size="12" fill="#888" font-family="Liberation Sans">a</text></svg>
<svg class="a" style="left:1901px;top:744px" width="6" height="16"><path d="M1 3h6M1.5 4v11h6" stroke="#aaa" stroke-width="1.1" fill="none"/></svg>
<!-- transform panel -->
<div class="a" style="left:1647px;top:765px;width:260px;height:30px;background:#282828"></div>
<div class="a" style="left:1665px;top:767px;width:59px;height:28px;background:#333"></div>
<div class="a" style="left:1655px;top:775px;width:1px;height:8px;background:#666"></div><div class="a" style="left:1658px;top:775px;width:1px;height:8px;background:#666"></div>
<div class="t" style="left:1670px;top:772px;font-size:11px">Transform</div>
<div class="t" style="left:1728px;top:772px;font-size:11px;color:#d0d0d0">Navigator</div>
<div class="t" style="left:1787px;top:772px;font-size:11px;color:#d0d0d0">History</div>
<div class="a" style="left:1899px;top:774px;width:9px;height:10px;background:repeating-linear-gradient(to bottom,#ddd 0 1.7px,transparent 1.7px 4px)"></div>
<svg class="a" style="left:1664px;top:829px" width="37" height="37"><path d="M0 0h6v3h9v-3h6v3h9v-3h6v6h-3v9h3v6h-3v9h3v6h-6v-3h-9v3h-6v-3h-9v3h-6v-6h3v-9h-3v-6h3v-9h-3z" fill="#6a6a6a"/></svg>
<div class="t" style="left:1717px;top:810px;font-size:11.5px;color:#9a9a9a">X:</div>
<div class="t" style="left:1717px;top:834px;font-size:11.5px;color:#9a9a9a">Y:</div>
<div class="t" style="left:1717px;top:864px;font-size:11.5px;color:#9a9a9a">R:</div>
<div class="a" style="left:1730px;top:807px;width:65px;height:19px;background:#2b2b2b;border-radius:3px"></div>
<div class="a" style="left:1730px;top:831px;width:65px;height:20px;background:#2b2b2b;border-radius:3px"></div>
<div class="a" style="left:1730px;top:861px;width:65px;height:20px;background:#2b2b2b;border-radius:3px"></div>
<div class="t" style="left:1736px;top:810px;font-size:11.5px;color:#c0c0c0">60 mm</div>
<div class="t" style="left:1736px;top:834px;font-size:11.5px;color:#c0c0c0">25 mm</div>
<div class="t" style="left:1736px;top:864px;font-size:11.5px;color:#c0c0c0">0 °</div>
<div class="chev" style="left:1785px;top:866px;border-color:#aaa"></div>
<div class="t" style="left:1808px;top:810px;font-size:11.5px;color:#9a9a9a">W:</div>
<div class="t" style="left:1811px;top:834px;font-size:11.5px;color:#9a9a9a">H:</div>
<div class="t" style="left:1813px;top:864px;font-size:11.5px;color:#9a9a9a">S:</div>
<div class="a" style="left:1825px;top:807px;width:65px;height:19px;background:#2b2b2b;border-radius:3px"></div>
<div class="a" style="left:1825px;top:831px;width:65px;height:20px;background:#2b2b2b;border-radius:3px"></div>
<div class="a" style="left:1825px;top:861px;width:65px;height:20px;background:#2b2b2b;border-radius:3px"></div>
<div class="t" style="left:1831px;top:810px;font-size:11.5px;color:#c0c0c0">137 mm</div>
<div class="t" style="left:1831px;top:834px;font-size:11.5px;color:#c0c0c0">252 mm</div>
<div class="t" style="left:1831px;top:864px;font-size:11.5px;color:#c0c0c0">0 °</div>
<div class="chev" style="left:1880px;top:866px;border-color:#aaa"></div>
<svg class="a" style="left:1900px;top:819px" width="7" height="21"><path d="M6.5 0.5h-5v8 M6.5 20.5h-5v-8" stroke="#aaa" stroke-width="1.1" fill="none"/></svg>
<div class="a" style="left:1845px;top:889px;width:45px;height:26px;background:#3c3c3c;border-radius:3px"></div>
<div class="a" style="left:1875px;top:889px;width:1px;height:26px;background:#333"></div>
<svg class="a" style="left:1851px;top:894px" width="18" height="17"><rect x="1.5" y="1.5" width="14" height="14" fill="none" stroke="#777" stroke-width="1.1" stroke-dasharray="4 2"/><rect x="1" y="8" width="8" height="8" rx="2" fill="#777"/></svg>
<div class="chev" style="left:1880px;top:897px"></div>

<!-- ANNOT -->
<svg class="a" style="left:0;top:0;pointer-events:none" width="1907" height="930">
<g fill="none" stroke="#e31c1c" stroke-linecap="round" stroke-linejoin="round">
<path d="M5 22.5 L38.5 22.3" stroke-width="5"/>
<path d="M47.7 42.3 C52.9 45.6 67.1 55.3 78.7 62.3 C90.3 69.3 104.5 76.9 117.4 84.2 C130.3 91.5 143.1 98.9 156.0 106.0 C168.9 113.1 181.2 119.7 194.8 126.8 C208.4 133.9 214.7 137.2 237.4 148.7 C260.1 160.2 298.6 177.8 331.0 196.0 C363.4 214.2 402.2 238.5 432.0 258.0 C461.8 277.5 477.7 291.0 510.0 313.0 C542.3 335.0 583.0 362.7 626.0 390.0 C669.0 417.3 744.3 462.5 768.0 477.0" stroke-width="5"/>
<path d="M93 45.3 C80 44.5, 62 43, 47.7 42.3" stroke-width="4.8"/>
<path d="M48.5 43.5 C51 50, 52 57, 52.3 64" stroke-width="4.8"/>
<path d="M789.0 349.6 C789.2 347.0 790.5 344.6 790.0 334.0 C789.5 323.4 786.6 308.3 786.0 286.0 C785.4 263.7 786.4 221.7 786.4 200.0 C786.4 178.3 785.2 166.9 786.2 156.0 C787.2 145.1 791.3 144.7 792.7 134.7 C794.1 124.7 793.9 109.6 794.8 96.0 C795.7 82.4 796.9 62.8 798.0 53.0 C799.1 43.2 800.8 42.1 801.7 37.0 C802.6 31.9 803.0 24.8 803.3 22.4" stroke-width="4.6"/>
<path d="M803.3 22.4 C800 24, 792 30, 789 35 C787 39, 789 41, 792.6 39 L800 32.6 L804.4 25 C812 27, 819 31, 824.8 45" stroke-width="4.6"/>
<path d="M1621.0 618.5 C1621.5 617.7 1622.7 614.6 1624.0 613.5 C1625.3 612.4 1627.3 611.8 1629.0 612.0 C1630.7 612.2 1632.8 613.6 1634.0 615.0 C1635.2 616.4 1635.9 618.5 1636.0 620.6 C1636.1 622.7 1635.8 624.9 1634.4 627.5 C1633.0 630.1 1628.8 633.3 1627.5 636.0 C1626.2 638.7 1626.8 642.6 1626.7 643.9" stroke-width="4.2"/>
<path d="M1628.4 652 L1634.4 653.8" stroke-width="4.6"/>
<path d="M1672.3 650.8 C1673 648.5, 1675 647.7, 1680 647.7 L1758.7 647.5" stroke-width="4.2"/>
</g></svg>
<!-- /ANNOT -->
</body></html>
